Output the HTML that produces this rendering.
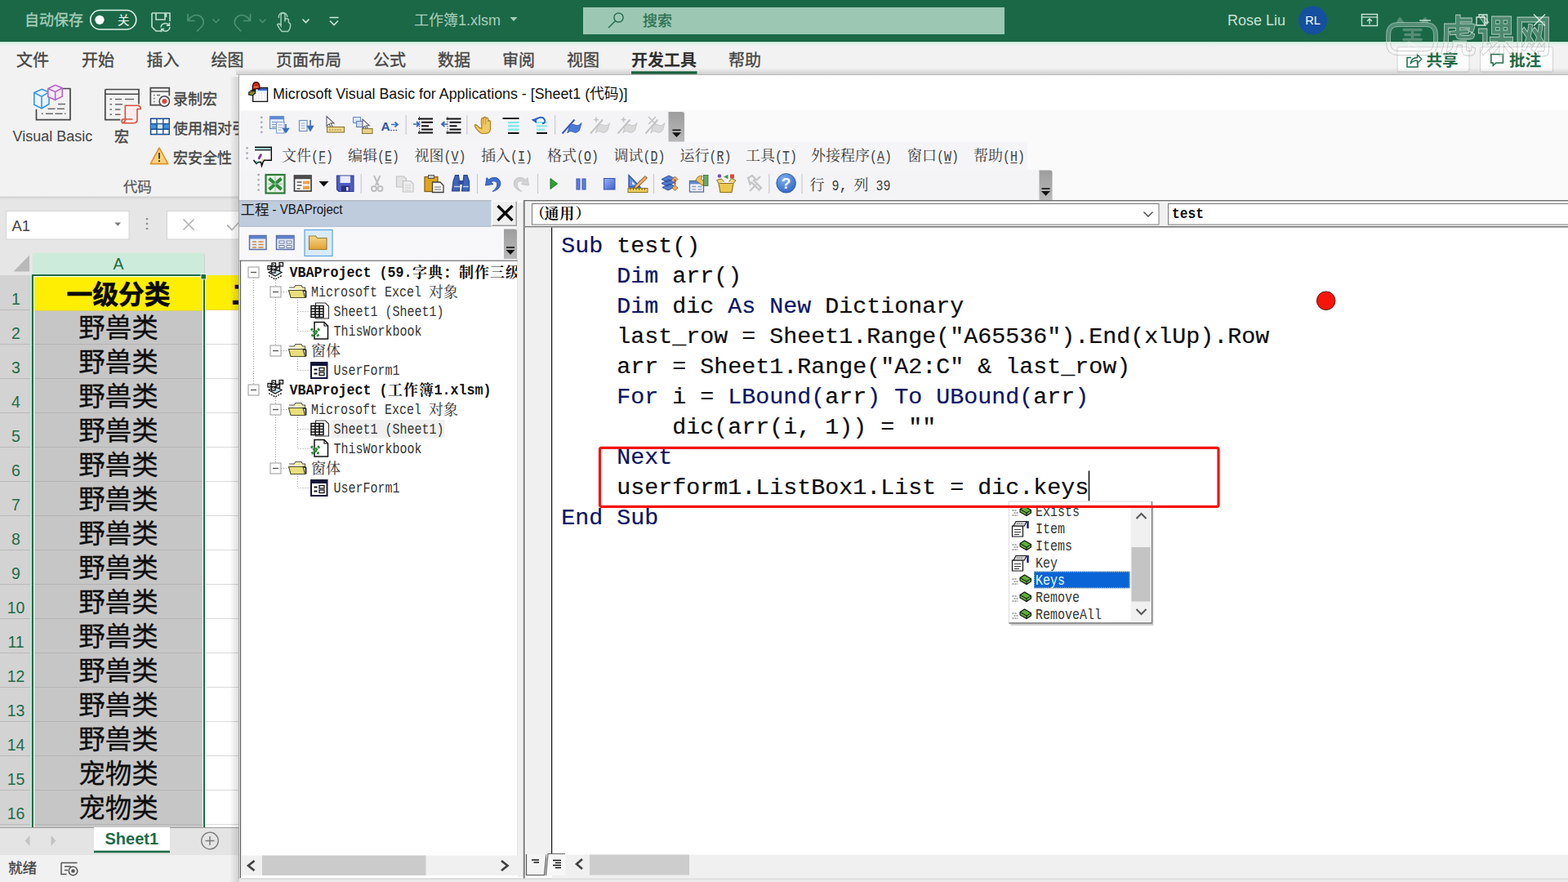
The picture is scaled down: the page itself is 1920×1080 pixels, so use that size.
<!DOCTYPE html>
<html lang="zh"><head><meta charset="utf-8"><title>Excel VBA</title>
<style>html,body{margin:0;padding:0;width:1920px;height:1080px;overflow:hidden;background:#f1f1f1;font-family:"Liberation Sans",sans-serif}svg{display:block;position:absolute;left:0;top:0;z-index:1}.t{position:absolute;left:0;top:0;width:1920px;height:1080px;overflow:hidden;z-index:0;color:#f1f1f1;font-size:8px;line-height:9px}.t p{margin:0}</style></head>
<body>
<div class="t"><p>自动保存 关  工作簿1.xlsm  搜索  Rose Liu RL</p><p>文件 开始 插入 绘图 页面布局 公式 数据 审阅 视图 开发工具 帮助  共享 批注</p><p>Visual Basic  宏  录制宏  使用相对引用  宏安全性  代码</p><p>A1  A  一级分类 二级分类  野兽类 宠物类  Sheet1  就绪</p><p>Microsoft Visual Basic for Applications - [Sheet1 (代码)]</p><p>文件(F) 编辑(E) 视图(V) 插入(I) 格式(O) 调试(D) 运行(R) 工具(T) 外接程序(A) 窗口(W) 帮助(H)  行 9, 列 39</p><p>工程 - VBAProject  VBAProject (59.字典：制作三级  Microsoft Excel 对象  Sheet1 (Sheet1)  ThisWorkbook  窗体  UserForm1  VBAProject (工作簿1.xlsm)</p><p>(通用)  test</p><p>Sub test()</p><p>Dim arr()</p><p>Dim dic As New Dictionary</p><p>last_row = Sheet1.Range(&quot;A65536&quot;).End(xlUp).Row</p><p>arr = Sheet1.Range(&quot;A2:C&quot; &amp; last_row)</p><p>For i = LBound(arr) To UBound(arr)</p><p>dic(arr(i, 1)) = &quot;&quot;</p><p>Next</p><p>userform1.ListBox1.List = dic.keys</p><p>End Sub</p><p>Exists Item Items Key Keys Remove RemoveAll</p><p>虎课网</p></div>
<svg width="1920" height="1080" viewBox="0 0 1920 1080" font-family='"Liberation Sans", "Noto Sans CJK SC", sans-serif'><defs><linearGradient id="tbg" x1="0" y1="0" x2="0" y2="1"><stop offset="0" stop-color="#d9fdec"/><stop offset="0.45" stop-color="#daf3e6"/><stop offset="1" stop-color="#f1f1f1"/></linearGradient><linearGradient id="rsh" x1="0" y1="0" x2="0" y2="1"><stop offset="0" stop-color="#f2f2f2"/><stop offset="0.35" stop-color="#d3d3d3"/><stop offset="1" stop-color="#e6e6e6"/></linearGradient><linearGradient id="vsh" x1="0" y1="0" x2="1" y2="0"><stop offset="0" stop-color="#000" stop-opacity="0"/><stop offset="1" stop-color="#000" stop-opacity="0.14"/></linearGradient><linearGradient id="vsh2" x1="0" y1="0" x2="0" y2="1"><stop offset="0" stop-color="#000" stop-opacity="0"/><stop offset="1" stop-color="#000" stop-opacity="0.16"/></linearGradient><linearGradient id="ovf" x1="0" y1="0" x2="0" y2="1"><stop offset="0" stop-color="#9d9d9d"/><stop offset="1" stop-color="#b9b9b9"/></linearGradient><linearGradient id="stp" x1="0" y1="0" x2="1" y2="1"><stop offset="0" stop-color="#9db4f2"/><stop offset="1" stop-color="#3c5fcf"/></linearGradient><radialGradient id="hlp" cx="0.4" cy="0.3" r="0.8"><stop offset="0" stop-color="#7fb0f0"/><stop offset="1" stop-color="#2a5fc0"/></radialGradient><linearGradient id="ptl" x1="0" y1="0" x2="0" y2="1"><stop offset="0" stop-color="#c3d1e6"/><stop offset="1" stop-color="#b1c3dc"/></linearGradient><linearGradient id="fld" x1="0" y1="0" x2="0" y2="1"><stop offset="0" stop-color="#f7d98a"/><stop offset="1" stop-color="#e0a030"/></linearGradient></defs>
<rect width="1920" height="1080" fill="#f1f1f1"/>
<rect x="0" y="0" width="1920" height="51" fill="#1b6847"/>
<rect x="0" y="51" width="1920" height="5" fill="url(#tbg)"/>
<rect x="0" y="50" width="1920" height="1.2" fill="#1a5a3d"/>
<text x="30" y="31" font-size="18" fill="#a7d0bb" stroke="#a7d0bb" stroke-width="0.3">自动保存</text>
<rect x="110.75" y="12.5" width="56" height="23.5" fill="none" stroke="#e3f3ea" stroke-width="1.6" rx="11.75"/>
<circle cx="122" cy="24.3" r="5.6" fill="#fff"/>
<text x="144" y="29.5" font-size="14.5" fill="#f4fbf7">关</text>
<path d="M186 16h22v10M186 16v17l5 5h6M191 16v8h11v-8M203.5 16v5" fill="none" stroke="#bfe0cf" stroke-width="1.6"/>
<path d="M197 33.5a5.5 5.5 0 0 1 10-2.5M208 33a5.5 5.5 0 0 1-10 2.8M207.5 27.5v3.8h-3.8M197.6 39.2v-3.6h3.6" fill="none" stroke="#bfe0cf" stroke-width="1.5"/>
<path d="M230 17v8.5h8.5M230.5 25c3-5.5 9-8 14-5.5 5 2.5 6.5 9 2.5 13l-6 6" fill="none" stroke="#4d9270" stroke-width="1.7"/>
<path d="M260.5 23.5l4 4 4-4" fill="none" stroke="#4d9270" stroke-width="1.5"/>
<path d="M306.5 17v8.5h-8.5M306 25c-3-5.5-9-8-14-5.5-5 2.5-6.5 9-2.5 13l6 6" fill="none" stroke="#4d9270" stroke-width="1.7"/>
<path d="M317.5 23.5l4 4 4-4" fill="none" stroke="#4d9270" stroke-width="1.5"/>
<path d="M344 27v-8.5a2.5 2.5 0 0 1 5 0v8M349 26.5v-1.5a2.2 2.2 0 0 1 4.400 0v3M353.400 28a2.200 2.200 0 0 1 2.200 2.200c0 4-1 6.500-3 8.300h-7.500c-2.500-2.500-4-5-5.500-8.500 1.500-1.500 3-.8 4.400 1.500V27" fill="none" stroke="#a5d0ba" stroke-width="1.5"/>
<path d="M341.5 22a5.2 5.2 0 1 1 10.2-1" fill="none" stroke="#a5d0ba" stroke-width="1.3"/>
<path d="M370.5 23.5l4 4 4-4" fill="none" stroke="#cfe8db" stroke-width="1.6"/>
<path d="M403.5 21.5h11M404 25.5l5 5 5-5" fill="none" stroke="#cfe8db" stroke-width="1.6"/>
<text x="507" y="31" font-size="18" fill="#a7d0bb">工作簿</text>
<text x="561.0" y="31" font-size="18" fill="#a7d0bb">1.xlsm</text>
<path d="M624.5 21h9l-4.500 5z" fill="#a7d0bb"/>
<rect x="714" y="9" width="516" height="33" fill="#9cc8b3"/>
<circle cx="757.5" cy="21.5" r="5.6" fill="none" stroke="#2d7051" stroke-width="1.5"/>
<line x1="753.5" y1="25.5" x2="745" y2="34" stroke="#2d7051" stroke-width="1.6"/>
<text x="787" y="31.5" font-size="18" fill="#2d7051" stroke="#2d7051" stroke-width="0.3">搜索</text>
<text x="1503" y="31" font-size="18" fill="#c4e2d3">Rose Liu</text>
<circle cx="1607.5" cy="25" r="17.5" fill="#14509f"/>
<text x="1607.5" y="30.3" font-size="14.5" fill="#fff" text-anchor="middle">RL</text>
<rect x="1667.5" y="17.5" width="19" height="14" fill="none" stroke="#cfe8db" stroke-width="1.4"/>
<line x1="1667.5" y1="21" x2="1686.5" y2="21" stroke="#cfe8db" stroke-width="1.2"/>
<path d="M1677 29.5v-6M1674 26l3-3 3 3" fill="none" stroke="#cfe8db" stroke-width="1.3"/>
<line x1="1738" y1="25" x2="1752" y2="25" stroke="#cfe8db" stroke-width="1.3"/>
<path d="M1808 21h10v10h-10zM1811 21v-3h10v10h-3" fill="none" stroke="#cfe8db" stroke-width="1.3"/>
<path d="M1878 17.5l14 14M1892 17.5l-14 14" fill="none" stroke="#cfe8db" stroke-width="1.4"/>
<rect x="0" y="56" width="1920" height="185" fill="#f2f2f2"/>
<text x="20" y="80.6" font-size="20" fill="#454545" stroke="#454545" stroke-width="0.35">文件</text>
<text x="100" y="80.6" font-size="20" fill="#454545" stroke="#454545" stroke-width="0.35">开始</text>
<text x="179.5" y="80.6" font-size="20" fill="#454545" stroke="#454545" stroke-width="0.35">插入</text>
<text x="258.5" y="80.6" font-size="20" fill="#454545" stroke="#454545" stroke-width="0.35">绘图</text>
<text x="338" y="80.6" font-size="20" fill="#454545" stroke="#454545" stroke-width="0.35">页面布局</text>
<text x="457" y="80.6" font-size="20" fill="#454545" stroke="#454545" stroke-width="0.35">公式</text>
<text x="536" y="80.6" font-size="20" fill="#454545" stroke="#454545" stroke-width="0.35">数据</text>
<text x="615" y="80.6" font-size="20" fill="#454545" stroke="#454545" stroke-width="0.35">审阅</text>
<text x="694" y="80.6" font-size="20" fill="#454545" stroke="#454545" stroke-width="0.35">视图</text>
<text x="892" y="80.6" font-size="20" fill="#454545" stroke="#454545" stroke-width="0.35">帮助</text>
<text x="773" y="80.6" font-size="20" font-weight="bold" fill="#2f2f2f">开发工具</text>
<rect x="773" y="87.3" width="80.5" height="3.4" fill="#1e6b47"/>
<rect x="1711" y="57.5" width="88" height="30.5" fill="#fdfdfd" stroke="#d2d2d2" stroke-width="1" rx="2"/>
<rect x="1812.5" y="57.5" width="89" height="30.5" fill="#fdfdfd" stroke="#d2d2d2" stroke-width="1" rx="2"/>
<path d="M1728 70.5h-5v11.5h13v-4.500" fill="none" stroke="#1e6b47" stroke-width="1.5"/>
<path d="M1727 78c.8-5 4-7.500 8.500-7.500v-3.500l5.200 5.300-5.200 5.300v-3.500c-3.800 0-6.300 1-8.500 3.900z" fill="none" stroke="#1e6b47" stroke-width="1.4"/>
<text x="1746.5" y="81.2" font-size="19.6" font-weight="bold" fill="#1e6b47">共享</text>
<path d="M1825.800 66.500h14.600v10.400h-8.500l-3.600 3.400v-3.400h-2.500z" fill="none" stroke="#1e6b47" stroke-width="1.5"/>
<text x="1848" y="81.2" font-size="19.6" font-weight="bold" fill="#1e6b47">批注</text>
<path d="M64 108.500h22v38.200h-41.500v-13" fill="none" stroke="#464646" stroke-width="1.7"/>
<path d="M71 127.500h9.500M58.500 133.300h22M56 139.200h24.500" fill="none" stroke="#6a6a6a" stroke-width="1.5" stroke-dasharray="9 2.500"/>
<path d="M50.800 139.200h2" fill="none" stroke="#6a6a6a" stroke-width="1.5"/>
<path d="M41.800 113.500l9.600-4.300 8.600 3.700v14.600l-9 5.300-9.200-4.600z" fill="#eaf4fc" stroke="#3a96dd" stroke-width="1.6" stroke-linejoin="round"/>
<path d="M41.800 113.500l9.200 4.600 9-5.200M51 118.100v14.700" fill="none" stroke="#3a96dd" stroke-width="1.6"/>
<path d="M58.800 108.500l8.900-4.200 8.600 3.400v10.300l-8.600 4.400-8.900-4z" fill="#f6e9f8" stroke="#b467c4" stroke-width="1.6" stroke-linejoin="round"/>
<path d="M58.800 108.500l8.900 3.900 8.600-4.700M67.700 112.400v10" fill="none" stroke="#b467c4" stroke-width="1.6"/>
<text x="15.5" y="172.7" font-size="18" fill="#444">Visual Basic</text>
<path d="M128.800 109.500h41.200v18M128.800 109.500v37.200h18.500" fill="none" stroke="#464646" stroke-width="1.7"/>
<line x1="128.800" y1="115.300" x2="170" y2="115.300" stroke="#464646" stroke-width="1.5"/>
<line x1="134.5" y1="121.4" x2="137" y2="121.4" stroke="#6a6a6a" stroke-width="1.5"/>
<line x1="134.5" y1="127.8" x2="137" y2="127.8" stroke="#6a6a6a" stroke-width="1.5"/>
<line x1="134.5" y1="134" x2="137" y2="134" stroke="#6a6a6a" stroke-width="1.5"/>
<line x1="134.5" y1="140.2" x2="137" y2="140.2" stroke="#6a6a6a" stroke-width="1.5"/>
<path d="M141 121.400h8M153 121.400h11M141 127.800h9M141 134h6.500M141 140.200h6.500" fill="none" stroke="#6a6a6a" stroke-width="1.5"/>
<path d="M153.300 129.300h15.200c2.600 0 3.700 1.700 3.700 4.200h-4.200v12.800c0 2.700-1.800 4.400-4.400 4.400h-13.700c2.400-.6 3.400-2 3.400-4.400z" fill="#fdeeec" stroke="#d8503f" stroke-width="1.6" stroke-linejoin="round"/>
<path d="M149.900 150.700c-1-1.300-1-3.500 0-4.700h12.500" fill="none" stroke="#d8503f" stroke-width="1.5"/>
<text x="140" y="173.700" font-size="18" fill="#444" stroke="#444" stroke-width="0.35">宏</text>
<path d="M197 128.700h-12.700v-21h23v9.500" fill="none" stroke="#464646" stroke-width="1.7"/>
<line x1="184.3" y1="112" x2="207.3" y2="112" stroke="#464646" stroke-width="1.4"/>
<path d="M188 116.500h1.500M188 120.500h1.500M188 124.500h1.500M192 116.500h4" fill="none" stroke="#6a6a6a" stroke-width="1.3"/>
<circle cx="201.3" cy="124" r="6.2" fill="#f6f6f6" stroke="#464646" stroke-width="1.5"/>
<circle cx="201.3" cy="124" r="3" fill="#d8473a"/>
<text x="212" y="127.6" font-size="18" fill="#444" stroke="#444" stroke-width="0.35">录制宏</text>
<rect x="184.6" y="145.3" width="22.6" height="19.2" fill="#fff" stroke="#1d4f91" stroke-width="1.6"/>
<rect x="185.4" y="151.8" width="21" height="6.3" fill="#3b8ee0"/>
<rect x="192.5" y="151.8" width="7" height="6.3" fill="#cfe4f8"/>
<path d="M192 145.300v19.200M199.800 145.300v19.200M184.600 151.600h22.600M184.600 158.300h22.600" fill="none" stroke="#1d4f91" stroke-width="1.4"/>
<text x="212" y="163.600" font-size="18" fill="#444" stroke="#444" stroke-width="0.35">使用相对引</text>
<path d="M195 181l10.800 19.600h-21.600z" fill="#fbd27a" stroke="#e3922a" stroke-width="1.6" stroke-linejoin="round"/>
<path d="M195 187v7.500" fill="none" stroke="#3a3a3a" stroke-width="1.9"/>
<circle cx="195" cy="197.2" r="1.1" fill="#3a3a3a"/>
<text x="212" y="199.6" font-size="18" fill="#444" stroke="#444" stroke-width="0.35">宏安全性</text>
<text x="150.7" y="234.8" font-size="17.6" fill="#5a5a5a" stroke="#5a5a5a" stroke-width="0.25">代码</text>
<rect x="0" y="243" width="1920" height="68" fill="#e6e6e6"/>
<rect x="0" y="239.5" width="1920" height="5" fill="url(#rsh)"/>
<rect x="7.5" y="258.5" width="150.5" height="34.5" fill="#fff" stroke="#d4d4d4" stroke-width="1"/>
<text x="14.5" y="282.5" font-size="18.5" fill="#444">A1</text>
<path d="M140.500 272.500h7.600l-3.800 4.200z" fill="#777"/>
<circle cx="180" cy="268" r="1.3" fill="#8c8c8c"/>
<circle cx="180" cy="274" r="1.3" fill="#8c8c8c"/>
<circle cx="180" cy="280" r="1.3" fill="#8c8c8c"/>
<rect x="204.5" y="258.5" width="120" height="34.5" fill="#fff" stroke="#d4d4d4" stroke-width="1"/>
<path d="M224.500 268.500l13 13M237.500 268.500l-13 13" fill="none" stroke="#b5b5b5" stroke-width="1.7"/>
<path d="M278 275.500l6 6 12-13" fill="none" stroke="#b5b5b5" stroke-width="1.8"/>
<rect x="0" y="1013.5" width="1920" height="33.5" fill="#e4e4e4"/>
<rect x="0" y="1012.8" width="300" height="1.2" fill="#9f9f9f"/>
<path d="M36.500 1023l-6 6.500 6 6.500z" fill="#c3c3c3"/>
<path d="M62.500 1023l6 6.500-6 6.500z" fill="#c3c3c3"/>
<rect x="115" y="1011" width="93" height="32" fill="#fff"/>
<rect x="115" y="1041.6" width="93" height="2.6" fill="#1e6b47"/>
<text x="161.3" y="1033.6" font-size="20" fill="#1e6b47" font-weight="bold" text-anchor="middle">Sheet1</text>
<circle cx="257" cy="1029.5" r="10.3" fill="none" stroke="#7a7a7a" stroke-width="1.3"/>
<path d="M251.500 1029.500h11M257 1024v11" fill="none" stroke="#7a7a7a" stroke-width="1.4"/>
<rect x="0" y="1047" width="1920" height="33" fill="#f1f1f1"/>
<text x="10" y="1068.6" font-size="17.6" fill="#444" stroke="#444" stroke-width="0.3">就绪</text>
<path d="M75 1056.500h19.500M75 1056.500v14h6.500M79 1061h8M79 1065.500h4" fill="none" stroke="#555" stroke-width="1.5"/>
<circle cx="89.5" cy="1066.5" r="5.3" fill="#f1f1f1" stroke="#555" stroke-width="1.5"/>
<circle cx="89.5" cy="1066.5" r="2.3" fill="#555"/>
<rect x="0" y="309" width="300" height="28" fill="#e6e6e6"/>
<rect x="40" y="309.5" width="210" height="27" fill="#cdebdb"/>
<text x="145" y="330.3" font-size="19.5" fill="#1e6b47" text-anchor="middle">A</text>
<path d="M16.500 332.500h19.500v-20z" fill="#b9b9b9"/>
<line x1="250.5" y1="311" x2="250.5" y2="336" stroke="#cfcfcf" stroke-width="1"/>
<rect x="0" y="337" width="40" height="676" fill="#d3d3d3"/>
<rect x="40" y="337" width="260" height="43" fill="#fdee03"/>
<rect x="40" y="380" width="210" height="633" fill="#c6c6c6"/>
<rect x="251" y="380" width="49" height="633" fill="#fff"/>
<line x1="0" y1="379.5" x2="38" y2="379.5" stroke="#b9b9b9" stroke-width="1"/>
<line x1="251" y1="379.5" x2="300" y2="379.5" stroke="#e9dc52" stroke-width="1"/>
<line x1="0" y1="421.5" x2="38" y2="421.5" stroke="#b9b9b9" stroke-width="1"/>
<line x1="41" y1="421.5" x2="249" y2="421.5" stroke="#b4b4b4" stroke-width="1"/>
<line x1="251" y1="421.5" x2="300" y2="421.5" stroke="#dadada" stroke-width="1"/>
<line x1="0" y1="463.5" x2="38" y2="463.5" stroke="#b9b9b9" stroke-width="1"/>
<line x1="41" y1="463.5" x2="249" y2="463.5" stroke="#b4b4b4" stroke-width="1"/>
<line x1="251" y1="463.5" x2="300" y2="463.5" stroke="#dadada" stroke-width="1"/>
<line x1="0" y1="505.5" x2="38" y2="505.5" stroke="#b9b9b9" stroke-width="1"/>
<line x1="41" y1="505.5" x2="249" y2="505.5" stroke="#b4b4b4" stroke-width="1"/>
<line x1="251" y1="505.5" x2="300" y2="505.5" stroke="#dadada" stroke-width="1"/>
<line x1="0" y1="547.5" x2="38" y2="547.5" stroke="#b9b9b9" stroke-width="1"/>
<line x1="41" y1="547.5" x2="249" y2="547.5" stroke="#b4b4b4" stroke-width="1"/>
<line x1="251" y1="547.5" x2="300" y2="547.5" stroke="#dadada" stroke-width="1"/>
<line x1="0" y1="589.5" x2="38" y2="589.5" stroke="#b9b9b9" stroke-width="1"/>
<line x1="41" y1="589.5" x2="249" y2="589.5" stroke="#b4b4b4" stroke-width="1"/>
<line x1="251" y1="589.5" x2="300" y2="589.5" stroke="#dadada" stroke-width="1"/>
<line x1="0" y1="631.5" x2="38" y2="631.5" stroke="#b9b9b9" stroke-width="1"/>
<line x1="41" y1="631.5" x2="249" y2="631.5" stroke="#b4b4b4" stroke-width="1"/>
<line x1="251" y1="631.5" x2="300" y2="631.5" stroke="#dadada" stroke-width="1"/>
<line x1="0" y1="673.5" x2="38" y2="673.5" stroke="#b9b9b9" stroke-width="1"/>
<line x1="41" y1="673.5" x2="249" y2="673.5" stroke="#b4b4b4" stroke-width="1"/>
<line x1="251" y1="673.5" x2="300" y2="673.5" stroke="#dadada" stroke-width="1"/>
<line x1="0" y1="715.5" x2="38" y2="715.5" stroke="#b9b9b9" stroke-width="1"/>
<line x1="41" y1="715.5" x2="249" y2="715.5" stroke="#b4b4b4" stroke-width="1"/>
<line x1="251" y1="715.5" x2="300" y2="715.5" stroke="#dadada" stroke-width="1"/>
<line x1="0" y1="757.5" x2="38" y2="757.5" stroke="#b9b9b9" stroke-width="1"/>
<line x1="41" y1="757.5" x2="249" y2="757.5" stroke="#b4b4b4" stroke-width="1"/>
<line x1="251" y1="757.5" x2="300" y2="757.5" stroke="#dadada" stroke-width="1"/>
<line x1="0" y1="799.5" x2="38" y2="799.5" stroke="#b9b9b9" stroke-width="1"/>
<line x1="41" y1="799.5" x2="249" y2="799.5" stroke="#b4b4b4" stroke-width="1"/>
<line x1="251" y1="799.5" x2="300" y2="799.5" stroke="#dadada" stroke-width="1"/>
<line x1="0" y1="841.5" x2="38" y2="841.5" stroke="#b9b9b9" stroke-width="1"/>
<line x1="41" y1="841.5" x2="249" y2="841.5" stroke="#b4b4b4" stroke-width="1"/>
<line x1="251" y1="841.5" x2="300" y2="841.5" stroke="#dadada" stroke-width="1"/>
<line x1="0" y1="883.5" x2="38" y2="883.5" stroke="#b9b9b9" stroke-width="1"/>
<line x1="41" y1="883.5" x2="249" y2="883.5" stroke="#b4b4b4" stroke-width="1"/>
<line x1="251" y1="883.5" x2="300" y2="883.5" stroke="#dadada" stroke-width="1"/>
<line x1="0" y1="925.5" x2="38" y2="925.5" stroke="#b9b9b9" stroke-width="1"/>
<line x1="41" y1="925.5" x2="249" y2="925.5" stroke="#b4b4b4" stroke-width="1"/>
<line x1="251" y1="925.5" x2="300" y2="925.5" stroke="#dadada" stroke-width="1"/>
<line x1="0" y1="967.5" x2="38" y2="967.5" stroke="#b9b9b9" stroke-width="1"/>
<line x1="41" y1="967.5" x2="249" y2="967.5" stroke="#b4b4b4" stroke-width="1"/>
<line x1="251" y1="967.5" x2="300" y2="967.5" stroke="#dadada" stroke-width="1"/>
<line x1="0" y1="1009.5" x2="38" y2="1009.5" stroke="#b9b9b9" stroke-width="1"/>
<line x1="41" y1="1009.5" x2="249" y2="1009.5" stroke="#b4b4b4" stroke-width="1"/>
<line x1="251" y1="1009.5" x2="300" y2="1009.5" stroke="#dadada" stroke-width="1"/>
<line x1="41" y1="380.5" x2="249" y2="380.5" stroke="#d8cf6a" stroke-width="1"/>
<text x="19.5" y="372.8" font-size="19.5" fill="#1e6b47" text-anchor="middle">1</text>
<text x="81.4" y="372.3" font-size="31.8" font-weight="bold" fill="#0a0a0a" stroke="#0a0a0a" stroke-width="0.6">一级分类</text>
<text x="19.5" y="414.8" font-size="19.5" fill="#1e6b47" text-anchor="middle">2</text>
<text x="96.25" y="413.2" font-size="32.5" fill="#0d0d0d" stroke="#0d0d0d" stroke-width="0.3">野兽类</text>
<text x="19.5" y="456.8" font-size="19.5" fill="#1e6b47" text-anchor="middle">3</text>
<text x="96.25" y="455.2" font-size="32.5" fill="#0d0d0d" stroke="#0d0d0d" stroke-width="0.3">野兽类</text>
<text x="19.5" y="498.8" font-size="19.5" fill="#1e6b47" text-anchor="middle">4</text>
<text x="96.25" y="497.2" font-size="32.5" fill="#0d0d0d" stroke="#0d0d0d" stroke-width="0.3">野兽类</text>
<text x="19.5" y="540.8" font-size="19.5" fill="#1e6b47" text-anchor="middle">5</text>
<text x="96.25" y="539.2" font-size="32.5" fill="#0d0d0d" stroke="#0d0d0d" stroke-width="0.3">野兽类</text>
<text x="19.5" y="582.8" font-size="19.5" fill="#1e6b47" text-anchor="middle">6</text>
<text x="96.25" y="581.2" font-size="32.5" fill="#0d0d0d" stroke="#0d0d0d" stroke-width="0.3">野兽类</text>
<text x="19.5" y="624.8" font-size="19.5" fill="#1e6b47" text-anchor="middle">7</text>
<text x="96.25" y="623.2" font-size="32.5" fill="#0d0d0d" stroke="#0d0d0d" stroke-width="0.3">野兽类</text>
<text x="19.5" y="666.8" font-size="19.5" fill="#1e6b47" text-anchor="middle">8</text>
<text x="96.25" y="665.2" font-size="32.5" fill="#0d0d0d" stroke="#0d0d0d" stroke-width="0.3">野兽类</text>
<text x="19.5" y="708.8" font-size="19.5" fill="#1e6b47" text-anchor="middle">9</text>
<text x="96.25" y="707.2" font-size="32.5" fill="#0d0d0d" stroke="#0d0d0d" stroke-width="0.3">野兽类</text>
<text x="19.5" y="750.8" font-size="19.5" fill="#1e6b47" text-anchor="middle">10</text>
<text x="96.25" y="749.2" font-size="32.5" fill="#0d0d0d" stroke="#0d0d0d" stroke-width="0.3">野兽类</text>
<text x="19.5" y="792.8" font-size="19.5" fill="#1e6b47" text-anchor="middle">11</text>
<text x="96.25" y="791.2" font-size="32.5" fill="#0d0d0d" stroke="#0d0d0d" stroke-width="0.3">野兽类</text>
<text x="19.5" y="834.8" font-size="19.5" fill="#1e6b47" text-anchor="middle">12</text>
<text x="96.25" y="833.2" font-size="32.5" fill="#0d0d0d" stroke="#0d0d0d" stroke-width="0.3">野兽类</text>
<text x="19.5" y="876.8" font-size="19.5" fill="#1e6b47" text-anchor="middle">13</text>
<text x="96.25" y="875.2" font-size="32.5" fill="#0d0d0d" stroke="#0d0d0d" stroke-width="0.3">野兽类</text>
<text x="19.5" y="918.8" font-size="19.5" fill="#1e6b47" text-anchor="middle">14</text>
<text x="96.25" y="917.2" font-size="32.5" fill="#0d0d0d" stroke="#0d0d0d" stroke-width="0.3">野兽类</text>
<text x="19.5" y="960.8" font-size="19.5" fill="#1e6b47" text-anchor="middle">15</text>
<text x="96.25" y="959.2" font-size="32.5" fill="#0d0d0d" stroke="#0d0d0d" stroke-width="0.3">宠物类</text>
<text x="19.5" y="1002.8" font-size="19.5" fill="#1e6b47" text-anchor="middle">16</text>
<text x="96.25" y="1001.2" font-size="32.5" fill="#0d0d0d" stroke="#0d0d0d" stroke-width="0.3">宠物类</text>
<text x="283.5" y="372.3" font-size="31.8" font-weight="bold" fill="#0a0a0a" stroke="#0a0a0a" stroke-width="0.6">二</text>
<rect x="37" y="337" width="1" height="676" fill="#c3e2d5"/>
<rect x="41" y="338" width="1.2" height="675" fill="#f4fbf7"/>
<rect x="247.8" y="338" width="1.2" height="675" fill="#e6f6ee"/>
<rect x="251" y="338" width="1" height="675" fill="#eefaf4"/>
<rect x="41" y="338" width="208" height="1.3" fill="#f1ffd9"/>
<rect x="39" y="336" width="2" height="677" fill="#1e6b47"/>
<rect x="249" y="336" width="2" height="677" fill="#1e6b47"/>
<rect x="39" y="336" width="212" height="2" fill="#1e6b47"/>
<rect x="246" y="335.5" width="6.5" height="6.5" fill="#1e6b47" stroke="#e6f2ec" stroke-width="1"/>
<rect x="281" y="94" width="12" height="990" fill="url(#vsh)"/>
<rect x="289" y="83" width="1640" height="9" fill="url(#vsh2)"/>
<rect x="293" y="92" width="1640" height="990" fill="#fff"/>
<rect x="293" y="91" width="1640" height="1" fill="#b8b8b8"/>
<rect x="292" y="91" width="1" height="985" fill="#a9a9a9"/>
<rect x="309.7" y="107.5" width="17.8" height="16.8" fill="#fff" stroke="#0d0d0d" stroke-width="1.3"/>
<rect x="315.5" y="108.1" width="11.4" height="2.7" fill="#2d55c0"/>
<rect x="310.4" y="111" width="16.4" height="2.2" fill="#d9f3fa"/>
<path d="M313 114.500h1.200M316.500 114.500h1.200M320 114.500h1.200M323.500 114.500h1.200" fill="none" stroke="#c6c6d0" stroke-width="1.1"/>
<path d="M313 117.500h1.200M316.500 117.500h1.200M320 117.500h1.200M323.500 117.500h1.200" fill="none" stroke="#c6c6d0" stroke-width="1.1"/>
<path d="M313 120.500h1.200M316.500 120.500h1.200M320 120.500h1.200M323.500 120.500h1.200" fill="none" stroke="#c6c6d0" stroke-width="1.1"/>
<path d="M309.300 109.600v-4.300c.6-3.300 2.200-4.600 4.300-4.600 2.300 0 3.800 1.600 4.200 4.600v3.300h-4l-1.500 1z" fill="#cf2a17" stroke="#2a0d08" stroke-width="1.3"/>
<path d="M310.500 106.500h6" fill="none" stroke="#f08a6a" stroke-width="1"/>
<path d="M305 112.500l7.500-1.500v3.200l-3.500 2.800-4.500-1.200z" fill="#8a8a2a" stroke="#14140a" stroke-width="1.1"/>
<path d="M306.500 110.800h7" fill="none" stroke="#111" stroke-width="1.2"/>
<text x="334" y="120.5" font-size="18" fill="#111" textLength="388.1" lengthAdjust="spacingAndGlyphs">Microsoft Visual Basic for Applications - [Sheet1 (</text>
<text x="722.11" y="120.5" font-size="17.77" fill="#111">代码</text>
<text x="757.6461761182109" y="120.5" font-size="18" fill="#111" textLength="10.9" lengthAdjust="spacingAndGlyphs">)]</text>
<rect x="293" y="135" width="1640" height="110.5" fill="#fafafa"/>
<rect x="294" y="135.5" width="545" height="38" fill="#f4f4f7"/>
<rect x="294" y="173.5" width="964" height="34.5" fill="#f5f5f8"/>
<rect x="294" y="208" width="995" height="37" fill="#f4f4f7"/>
<rect x="641" y="245" width="1300" height="1.6" fill="#6b6b6b"/>
<rect x="641" y="246.6" width="1300" height="1.4" fill="#fdfdfd"/>
<rect x="319" y="142.5" width="2.5" height="2.5" fill="#a9a9b2" rx="0.8"/>
<rect x="319" y="148.5" width="2.5" height="2.5" fill="#a9a9b2" rx="0.8"/>
<rect x="319" y="154.5" width="2.5" height="2.5" fill="#a9a9b2" rx="0.8"/>
<rect x="319" y="160.5" width="2.5" height="2.5" fill="#a9a9b2" rx="0.8"/>
<rect x="330.5" y="142.5" width="17" height="15" fill="#e9f0fb" stroke="#6f8fc8" stroke-width="1.2"/>
<rect x="331" y="143" width="16" height="3.2" fill="#5d8ad6"/>
<path d="M333 149.500h5M333 152.500h5M333 155.500h5" fill="none" stroke="#7d8fb0" stroke-width="1.2"/>
<rect x="338.5" y="149.5" width="9.5" height="13.5" fill="#f8fbff" stroke="#7f9fd0" stroke-width="1.1"/>
<path d="M340.500 153h5.500M340.500 156h5.500M340.500 159h4" fill="none" stroke="#8aa0c4" stroke-width="1.1"/>
<path d="M350 152v7M346.800 157.500l3.200 4.500 3.200-4.500z" fill="#3a6cc6" stroke="#3a6cc6" stroke-width="1.6"/>
<rect x="366.5" y="147.5" width="9.5" height="13" fill="#f4f8ff" stroke="#6f8fc8" stroke-width="1.2"/>
<path d="M368.500 151h5M368.500 154h5M368.500 157h5" fill="none" stroke="#8aa0c4" stroke-width="1.1"/>
<path d="M380 147v9M376.800 154.500l3.200 5.500 3.200-5.500z" fill="#3a6cc6" stroke="#3a6cc6" stroke-width="1.6"/>
<path d="M400 142.500v12l3-2.800 2.500 5 2-1-2.500-4.800h4z" fill="#fff" stroke="#5a5a6a" stroke-width="1.1"/>
<rect x="400.5" y="155.5" width="21" height="6.5" fill="#f0d88a" stroke="#8a7a3a" stroke-width="1.1"/>
<path d="M403 158.800h16" fill="none" stroke="#a89a5a" stroke-width="1.2" stroke-dasharray="2 1.200"/>
<rect x="432.5" y="143.5" width="9" height="7" fill="#dfe9f8" stroke="#6f8fc8" stroke-width="1.1"/>
<rect x="436.5" y="148.5" width="9" height="7" fill="#cfdcf2" stroke="#5f7fb8" stroke-width="1.1"/>
<path d="M444 146v11l2.800-2.500 2.200 4.300 1.800-.9-2.200-4.200h3.600z" fill="#fff" stroke="#5a5a6a" stroke-width="1.1"/>
<rect x="443.5" y="157.5" width="12.5" height="6" fill="#e6d28a" stroke="#8a7a3a" stroke-width="1.1"/>
<text x="466.5" y="160" font-size="15.5" fill="#2f55a8" font-weight="bold">A</text>
<path d="M479 152.500h6.500M483.500 149.500l3.500 3-3.500 3" fill="none" stroke="#3a6cc6" stroke-width="1.7"/>
<path d="M478.500 159.500h9" fill="none" stroke="#2f55a8" stroke-width="1.5" stroke-dasharray="1.500 1.500"/>
<line x1="497.2" y1="141" x2="497.2" y2="165" stroke="#c9c9cf" stroke-width="1.2"/>
<path d="M512 145.500h18M516 149.800h14M516 154.200h9M516 158.500h14M512 162.500h18" fill="none" stroke="#111" stroke-width="2.1"/>
<path d="M513.5 143v21" fill="none" stroke="#222" stroke-width="1" stroke-dasharray="1.200 1.600"/>
<path d="M506 152h6M510 149l3.500 3-3.500 3" fill="none" stroke="#2f62c0" stroke-width="1.7"/>
<path d="M546.5 145.500h18M550.5 149.800h14M550.5 154.200h9M550.5 158.500h14M546.5 162.500h18" fill="none" stroke="#111" stroke-width="2.1"/>
<path d="M548.0 143v21" fill="none" stroke="#222" stroke-width="1" stroke-dasharray="1.200 1.600"/>
<path d="M541.5 152h6.500M544.5 149l-3.500 3 3.500 3" fill="none" stroke="#2f62c0" stroke-width="1.7"/>
<line x1="571.8" y1="141" x2="571.8" y2="165" stroke="#c9c9cf" stroke-width="1.2"/>
<path d="M586.500 156c-2-2.500-3.800-4-5-3.200-1.200 1 .5 3 2.500 5.700 2 2.800 3.800 5 7.500 5h3c3.800 0 6-2.500 6-6.500v-8c0-1.800-2.600-1.800-2.600 0v-3.300c0-1.900-2.700-1.900-2.700 0v-1.200c0-1.900-2.800-1.900-2.800 0v1.200c0-1.800-2.700-1.800-2.700 0v11.800z" fill="#f2c860" stroke="#a87b25" stroke-width="1.1"/>
<path d="M589.200 146v6.500M592 144.500v8M594.700 145.700v7" fill="none" stroke="#c29535" stroke-width="0.9"/>
<path d="M615.500 145h20M622 163h13.500" fill="none" stroke="#111" stroke-width="2"/>
<path d="M622 150h13.500M622 154.300h13.500M622 158.600h13.500" fill="none" stroke="#7fe6e6" stroke-width="2.2"/>
<path d="M657 150h13M657 154.300h13M657 158.600h10" fill="none" stroke="#8fe8ee" stroke-width="2.2"/>
<path d="M657 163h13" fill="none" stroke="#111" stroke-width="2"/>
<path d="M655.500 148.500c1-5 9-6.500 11.500-1.800 1.200 2.500-.5 4.500-3 4.500" fill="none" stroke="#2f62c0" stroke-width="1.9"/>
<path d="M650.500 146.500l6.500-2v6.500z" fill="#2f62c0"/>
<line x1="679.6" y1="141" x2="679.6" y2="165" stroke="#c9c9cf" stroke-width="1.2"/>
<path d="M688.5 163.500l15-17" fill="none" stroke="#3558b0" stroke-width="1.9"/>
<path d="M697.0 155.500c2.500-3.500 4.500-3.800 7-2.500s5 1 8-2.500l-2.500 9c-3 3.200-5.500 3.300-8 2s-4.200-1.200-6.700 1.500z" fill="#4a7ad8" stroke="#3558b0" stroke-width="0.9"/>
<path d="M723 163.500l15-17" fill="none" stroke="#c2c2c2" stroke-width="1.9"/>
<path d="M731.5 155.500c2.500-3.500 4.500-3.800 7-2.500s5 1 8-2.500l-2.500 9c-3 3.200-5.500 3.300-8 2s-4.200-1.200-6.700 1.500z" fill="#d9d9d9" stroke="#c2c2c2" stroke-width="0.9"/>
<path d="M727 146.500h6M730 143.500v6" fill="none" stroke="#c2c2c2" stroke-width="1.6"/>
<path d="M756.5 163.500l15-17" fill="none" stroke="#c2c2c2" stroke-width="1.9"/>
<path d="M765.0 155.500c2.500-3.500 4.500-3.800 7-2.500s5 1 8-2.500l-2.500 9c-3 3.200-5.500 3.300-8 2s-4.200-1.200-6.700 1.500z" fill="#d9d9d9" stroke="#c2c2c2" stroke-width="0.9"/>
<path d="M760.500 146.500h6M763.500 143.500v6" fill="none" stroke="#c2c2c2" stroke-width="1.6"/>
<path d="M790.5 163.500l15-17" fill="none" stroke="#c2c2c2" stroke-width="1.9"/>
<path d="M799.0 155.500c2.500-3.500 4.500-3.800 7-2.500s5 1 8-2.500l-2.500 9c-3 3.200-5.500 3.300-8 2s-4.200-1.200-6.700 1.500z" fill="#d9d9d9" stroke="#c2c2c2" stroke-width="0.9"/>
<path d="M794 143l9 9M803 143l-9 9" fill="none" stroke="#c2c2c2" stroke-width="1.6"/>
<path d="M818.500 137h16.500q3 0 3 3v33.500h-19.500z" fill="url(#ovf)"/>
<path d="M823.500 159.300h10" fill="none" stroke="#111" stroke-width="1.6"/>
<path d="M823 162.300h11l-5.500 5.700z" fill="#111"/>
<rect x="301.3" y="180.0" width="2.5" height="2.5" fill="#a9a9b2" rx="0.8"/>
<rect x="301.3" y="186.3" width="2.5" height="2.5" fill="#a9a9b2" rx="0.8"/>
<rect x="301.3" y="192.6" width="2.5" height="2.5" fill="#a9a9b2" rx="0.8"/>
<rect x="312.3" y="180.3" width="19.8" height="16" fill="#fcfefe"/>
<rect x="312.3" y="181" width="19.5" height="2.5" fill="#9fd6d6"/>
<path d="M312 180.300h20.300v16h-9" fill="none" stroke="#0a0a0a" stroke-width="1.4"/>
<path d="M312 183.800h19.600" fill="none" stroke="#0a0a0a" stroke-width="1.2"/>
<path d="M317.200 193.800l2.200-4" fill="none" stroke="#8a3a9a" stroke-width="3" stroke-linecap="round"/>
<path d="M310.500 196l3.500 4.500 2.500-2h3l1 4.500 2-5.500 1.500-1.500" fill="none" stroke="#0a0a0a" stroke-width="1.5"/>
<path d="M313.300 197.500l1.800 2.300" fill="none" stroke="#3aa88a" stroke-width="1.8"/>
<path d="M321 196.300l1.500-1" fill="none" stroke="#e8d06a" stroke-width="1.8"/>
<text x="345" y="196.8" font-size="18" fill="#3c3c3c" font-family='"Liberation Serif", "Noto Serif CJK SC", serif'>文件</text>
<text x="381.0" y="196.5" font-size="18" fill="#3c3c3c" font-family='"Liberation Mono", monospace' textLength="9" lengthAdjust="spacingAndGlyphs">(</text>
<text x="390.0" y="196.5" font-size="18" fill="#3c3c3c" font-family='"Liberation Mono", monospace' textLength="9" lengthAdjust="spacingAndGlyphs">F</text>
<line x1="390.5" y1="199.5" x2="398.5" y2="199.5" stroke="#3c3c3c" stroke-width="1"/>
<text x="399.0" y="196.5" font-size="18" fill="#3c3c3c" font-family='"Liberation Mono", monospace' textLength="9" lengthAdjust="spacingAndGlyphs">)</text>
<text x="426" y="196.8" font-size="18" fill="#3c3c3c" font-family='"Liberation Serif", "Noto Serif CJK SC", serif'>编辑</text>
<text x="462.0" y="196.5" font-size="18" fill="#3c3c3c" font-family='"Liberation Mono", monospace' textLength="9" lengthAdjust="spacingAndGlyphs">(</text>
<text x="471.0" y="196.5" font-size="18" fill="#3c3c3c" font-family='"Liberation Mono", monospace' textLength="9" lengthAdjust="spacingAndGlyphs">E</text>
<line x1="471.5" y1="199.5" x2="479.5" y2="199.5" stroke="#3c3c3c" stroke-width="1"/>
<text x="480.0" y="196.5" font-size="18" fill="#3c3c3c" font-family='"Liberation Mono", monospace' textLength="9" lengthAdjust="spacingAndGlyphs">)</text>
<text x="507.5" y="196.8" font-size="18" fill="#3c3c3c" font-family='"Liberation Serif", "Noto Serif CJK SC", serif'>视图</text>
<text x="543.5" y="196.5" font-size="18" fill="#3c3c3c" font-family='"Liberation Mono", monospace' textLength="9" lengthAdjust="spacingAndGlyphs">(</text>
<text x="552.5" y="196.5" font-size="18" fill="#3c3c3c" font-family='"Liberation Mono", monospace' textLength="9" lengthAdjust="spacingAndGlyphs">V</text>
<line x1="553.0" y1="199.5" x2="561.0" y2="199.5" stroke="#3c3c3c" stroke-width="1"/>
<text x="561.5" y="196.5" font-size="18" fill="#3c3c3c" font-family='"Liberation Mono", monospace' textLength="9" lengthAdjust="spacingAndGlyphs">)</text>
<text x="589" y="196.8" font-size="18" fill="#3c3c3c" font-family='"Liberation Serif", "Noto Serif CJK SC", serif'>插入</text>
<text x="625.0" y="196.5" font-size="18" fill="#3c3c3c" font-family='"Liberation Mono", monospace' textLength="9" lengthAdjust="spacingAndGlyphs">(</text>
<text x="634.0" y="196.5" font-size="18" fill="#3c3c3c" font-family='"Liberation Mono", monospace' textLength="9" lengthAdjust="spacingAndGlyphs">I</text>
<line x1="634.5" y1="199.5" x2="642.5" y2="199.5" stroke="#3c3c3c" stroke-width="1"/>
<text x="643.0" y="196.5" font-size="18" fill="#3c3c3c" font-family='"Liberation Mono", monospace' textLength="9" lengthAdjust="spacingAndGlyphs">)</text>
<text x="670" y="196.8" font-size="18" fill="#3c3c3c" font-family='"Liberation Serif", "Noto Serif CJK SC", serif'>格式</text>
<text x="706.0" y="196.5" font-size="18" fill="#3c3c3c" font-family='"Liberation Mono", monospace' textLength="9" lengthAdjust="spacingAndGlyphs">(</text>
<text x="715.0" y="196.5" font-size="18" fill="#3c3c3c" font-family='"Liberation Mono", monospace' textLength="9" lengthAdjust="spacingAndGlyphs">O</text>
<line x1="715.5" y1="199.5" x2="723.5" y2="199.5" stroke="#3c3c3c" stroke-width="1"/>
<text x="724.0" y="196.5" font-size="18" fill="#3c3c3c" font-family='"Liberation Mono", monospace' textLength="9" lengthAdjust="spacingAndGlyphs">)</text>
<text x="751.5" y="196.8" font-size="18" fill="#3c3c3c" font-family='"Liberation Serif", "Noto Serif CJK SC", serif'>调试</text>
<text x="787.5" y="196.5" font-size="18" fill="#3c3c3c" font-family='"Liberation Mono", monospace' textLength="9" lengthAdjust="spacingAndGlyphs">(</text>
<text x="796.5" y="196.5" font-size="18" fill="#3c3c3c" font-family='"Liberation Mono", monospace' textLength="9" lengthAdjust="spacingAndGlyphs">D</text>
<line x1="797.0" y1="199.5" x2="805.0" y2="199.5" stroke="#3c3c3c" stroke-width="1"/>
<text x="805.5" y="196.5" font-size="18" fill="#3c3c3c" font-family='"Liberation Mono", monospace' textLength="9" lengthAdjust="spacingAndGlyphs">)</text>
<text x="832.5" y="196.8" font-size="18" fill="#3c3c3c" font-family='"Liberation Serif", "Noto Serif CJK SC", serif'>运行</text>
<text x="868.5" y="196.5" font-size="18" fill="#3c3c3c" font-family='"Liberation Mono", monospace' textLength="9" lengthAdjust="spacingAndGlyphs">(</text>
<text x="877.5" y="196.5" font-size="18" fill="#3c3c3c" font-family='"Liberation Mono", monospace' textLength="9" lengthAdjust="spacingAndGlyphs">R</text>
<line x1="878.0" y1="199.5" x2="886.0" y2="199.5" stroke="#3c3c3c" stroke-width="1"/>
<text x="886.5" y="196.5" font-size="18" fill="#3c3c3c" font-family='"Liberation Mono", monospace' textLength="9" lengthAdjust="spacingAndGlyphs">)</text>
<text x="913" y="196.8" font-size="18" fill="#3c3c3c" font-family='"Liberation Serif", "Noto Serif CJK SC", serif'>工具</text>
<text x="949.0" y="196.5" font-size="18" fill="#3c3c3c" font-family='"Liberation Mono", monospace' textLength="9" lengthAdjust="spacingAndGlyphs">(</text>
<text x="958.0" y="196.5" font-size="18" fill="#3c3c3c" font-family='"Liberation Mono", monospace' textLength="9" lengthAdjust="spacingAndGlyphs">T</text>
<line x1="958.5" y1="199.5" x2="966.5" y2="199.5" stroke="#3c3c3c" stroke-width="1"/>
<text x="967.0" y="196.5" font-size="18" fill="#3c3c3c" font-family='"Liberation Mono", monospace' textLength="9" lengthAdjust="spacingAndGlyphs">)</text>
<text x="993" y="196.8" font-size="18" fill="#3c3c3c" font-family='"Liberation Serif", "Noto Serif CJK SC", serif'>外接程序</text>
<text x="1065.0" y="196.5" font-size="18" fill="#3c3c3c" font-family='"Liberation Mono", monospace' textLength="9" lengthAdjust="spacingAndGlyphs">(</text>
<text x="1074.0" y="196.5" font-size="18" fill="#3c3c3c" font-family='"Liberation Mono", monospace' textLength="9" lengthAdjust="spacingAndGlyphs">A</text>
<line x1="1074.5" y1="199.5" x2="1082.5" y2="199.5" stroke="#3c3c3c" stroke-width="1"/>
<text x="1083.0" y="196.5" font-size="18" fill="#3c3c3c" font-family='"Liberation Mono", monospace' textLength="9" lengthAdjust="spacingAndGlyphs">)</text>
<text x="1111" y="196.8" font-size="18" fill="#3c3c3c" font-family='"Liberation Serif", "Noto Serif CJK SC", serif'>窗口</text>
<text x="1147.0" y="196.5" font-size="18" fill="#3c3c3c" font-family='"Liberation Mono", monospace' textLength="9" lengthAdjust="spacingAndGlyphs">(</text>
<text x="1156.0" y="196.5" font-size="18" fill="#3c3c3c" font-family='"Liberation Mono", monospace' textLength="9" lengthAdjust="spacingAndGlyphs">W</text>
<line x1="1156.5" y1="199.5" x2="1164.5" y2="199.5" stroke="#3c3c3c" stroke-width="1"/>
<text x="1165.0" y="196.5" font-size="18" fill="#3c3c3c" font-family='"Liberation Mono", monospace' textLength="9" lengthAdjust="spacingAndGlyphs">)</text>
<text x="1192" y="196.8" font-size="18" fill="#3c3c3c" font-family='"Liberation Serif", "Noto Serif CJK SC", serif'>帮助</text>
<text x="1228.0" y="196.5" font-size="18" fill="#3c3c3c" font-family='"Liberation Mono", monospace' textLength="9" lengthAdjust="spacingAndGlyphs">(</text>
<text x="1237.0" y="196.5" font-size="18" fill="#3c3c3c" font-family='"Liberation Mono", monospace' textLength="9" lengthAdjust="spacingAndGlyphs">H</text>
<line x1="1237.5" y1="199.5" x2="1245.5" y2="199.5" stroke="#3c3c3c" stroke-width="1"/>
<text x="1246.0" y="196.5" font-size="18" fill="#3c3c3c" font-family='"Liberation Mono", monospace' textLength="9" lengthAdjust="spacingAndGlyphs">)</text>
<rect x="315.3" y="212.7" width="2.5" height="2.5" fill="#a9a9b2" rx="0.8"/>
<rect x="315.3" y="218.89999999999998" width="2.5" height="2.5" fill="#a9a9b2" rx="0.8"/>
<rect x="315.3" y="225.1" width="2.5" height="2.5" fill="#a9a9b2" rx="0.8"/>
<rect x="315.3" y="231.29999999999998" width="2.5" height="2.5" fill="#a9a9b2" rx="0.8"/>
<rect x="325.5" y="214" width="23" height="22.5" fill="#e8f3e6" stroke="#2c7a36" stroke-width="2.2"/>
<path d="M329.500 218.500l15 13.500M344.500 218.500l-15 13.500" fill="none" stroke="#2c8a3a" stroke-width="4"/>
<path d="M327.500 225.200h19M337 216v18.500" fill="none" stroke="#8fc79a" stroke-width="1"/>
<rect x="360.5" y="215" width="20.5" height="19" fill="#fff" stroke="#3c3c3c" stroke-width="1.7"/>
<rect x="361" y="215.5" width="19.5" height="3.8" fill="#4a4a4a"/>
<path d="M363.500 223h6M363.500 227h6M363.500 231h4" fill="none" stroke="#555" stroke-width="1.5"/>
<rect x="371" y="221.5" width="8" height="4" fill="#f0a24a"/>
<rect x="371" y="227.5" width="8" height="4.5" fill="#f0a24a"/>
<path d="M390.500 222h12l-6 6.500z" fill="#111"/>
<path d="M412.500 215h20.500v19.500h-18l-2.500-2.500z" fill="#4f5cc0" stroke="#343e98" stroke-width="1.2"/>
<rect x="416.5" y="215.5" width="12.5" height="8.5" fill="#e9ecfb"/>
<rect x="418" y="227.5" width="10" height="7" fill="#2a2f78"/>
<rect x="424" y="229" width="2.6" height="4.5" fill="#e0e3f8"/>
<line x1="442.2" y1="213" x2="442.2" y2="237" stroke="#c9c9cf" stroke-width="1.2"/>
<path d="M458 215l5.500 12M465.500 215l-5.500 12" fill="none" stroke="#bdbdbd" stroke-width="1.9"/>
<circle cx="458" cy="231" r="3" fill="none" stroke="#bdbdbd" stroke-width="1.8"/>
<circle cx="465.5" cy="231" r="3" fill="none" stroke="#bdbdbd" stroke-width="1.8"/>
<path d="M485.500 216h9l3 3v10h-12z" fill="#e3e3e3" stroke="#c3c3c3" stroke-width="1.2"/>
<path d="M493.500 221.500h9l3.500 3.500v10h-12.500z" fill="#ececec" stroke="#c3c3c3" stroke-width="1.2"/>
<path d="M496 227h7M496 230h7M496 233h7" fill="none" stroke="#cfcfcf" stroke-width="1"/>
<rect x="520" y="216.5" width="16" height="18" fill="#e2a520" stroke="#8a6512" stroke-width="1.3"/>
<rect x="524.5" y="214.5" width="7" height="4" fill="#c9c9c9" stroke="#555" stroke-width="1"/>
<path d="M529.500 223h9.500l4 4v8.500h-13.500z" fill="#f3f3f3" stroke="#3f3f3f" stroke-width="1.3"/>
<path d="M532 229h8M532 232h8" fill="none" stroke="#777" stroke-width="1.1"/>
<path d="M555 222l2.500-7.500h4l1 7.500v12h-9zM567 222l1-7.500h4l2.500 7.500v12h-9z" fill="#3e64b8" stroke="#27428a" stroke-width="1.1"/>
<rect x="561.5" y="221" width="6" height="5" fill="#2e4f9c"/>
<path d="M556 228.500h7M567 228.500h7" fill="none" stroke="#b9ccf0" stroke-width="1.6"/>
<line x1="584.5" y1="213" x2="584.5" y2="237" stroke="#c9c9cf" stroke-width="1.2"/>
<path d="M596 217.500l-1.500 9.500 9.500-1.500-3-2.500c3-2 6.500-1.500 7.500 1.500 1 3.500-1.500 7-5.500 10 7-1.500 11-6.500 9.500-12-1.500-5.500-9-7-14-2.500z" fill="#3d6fd0" stroke="#2a4fa0" stroke-width="0.9"/>
<path d="M646 217.500l1.500 9.500-9.500-1.500 3-2.500c-3-2-6.500-1.500-7.500 1.500-1 3.500 1.500 7 5.500 10-7-1.500-11-6.500-9.500-12 1.500-5.500 9-7 14-2.500z" fill="#d2d2d2" stroke="#c4c4c4" stroke-width="0.9"/>
<line x1="658.5" y1="213" x2="658.5" y2="237" stroke="#c9c9cf" stroke-width="1.2"/>
<path d="M674 218.500v13l8.500-6.500z" fill="#2ea12e" stroke="#1e7a1e" stroke-width="1"/>
<rect x="706" y="219" width="4" height="13" fill="#5f7fe0" stroke="#3a55b0" stroke-width="1"/>
<rect x="713" y="219" width="4" height="13" fill="#5f7fe0" stroke="#3a55b0" stroke-width="1"/>
<rect x="739.5" y="218.5" width="13.5" height="13.5" fill="url(#stp)" stroke="#3552b0" stroke-width="1"/>
<path d="M770 214.500v14.500h14z" fill="#5f8fe8" stroke="#2a4fa0" stroke-width="1.3"/>
<path d="M774 222v4h4z" fill="#e9f0ff"/>
<path d="M777.500 227.500l12.500-12 2.500 2.500-12.500 12-3.500 1z" fill="#e8b070" stroke="#7a4a1a" stroke-width="1"/>
<rect x="769" y="230.5" width="24" height="5" fill="#f0d060" stroke="#8a7020" stroke-width="1"/>
<path d="M772 230.500v2.500M775.500 230.500v2.500M779 230.500v2.500M782.500 230.500v2.500M786 230.500v2.500M789.500 230.500v2.500" fill="none" stroke="#6a5510" stroke-width="0.9"/>
<line x1="800.5" y1="213" x2="800.5" y2="237" stroke="#c9c9cf" stroke-width="1.2"/>
<path d="M810 219.500l9-4.500 7 3.500-9 4.500zM810 224.500l9-4.500 7 3.500-9 4.500zM811 229.500l9-4.500 7 3.500-9 4.500z" fill="#4f7fd8" stroke="#27428a" stroke-width="0.9"/>
<path d="M826.500 216l3.500 3.500-3.500 3.500-3.500-3.500zM826.500 226.500l3.500 3.500-3.500 3.500-3.500-3.500z" fill="#e8b060" stroke="#9a6a20" stroke-width="0.9"/>
<path d="M826.500 219.500v7" fill="none" stroke="#c23a2a" stroke-width="1.6"/>
<rect x="844.5" y="221.5" width="17" height="13.5" fill="#f4f6fb" stroke="#5a6a8a" stroke-width="1.3"/>
<rect x="845" y="222" width="16" height="3.4" fill="#5d8ad6"/>
<path d="M847 228.500h5.500M854.500 228.500h5M847 231.800h5.500M854.500 231.800h5" fill="none" stroke="#8a9ab8" stroke-width="1.3"/>
<path d="M852 221c1-4 4.500-6.500 8-5.500l-1.500 4 6.500 4-5 3.500z" fill="#e8c060" stroke="#8a6a20" stroke-width="0.9"/>
<rect x="861.5" y="214.5" width="5.5" height="13" fill="#6aa86a" stroke="#3a6a3a" stroke-width="0.8"/>
<path d="M880 224.500h18l-2 11h-14z" fill="#ecc850" stroke="#8a7020" stroke-width="1.1"/>
<path d="M880 224.500l-2.500-4 6-1.500 3 3.500M898 224.500l3-3.500-5-2.500-3.500 4" fill="#f3d878" stroke="#8a7020" stroke-width="1"/>
<circle cx="881" cy="215.5" r="2.3" fill="#7a4ab8"/>
<rect x="894" y="213.5" width="5" height="5" fill="#d8483a"/>
<path d="M886 216.500l5.500-2.800v5.600z" fill="#3a9a4a"/>
<path d="M916 218l5-3 4 4-2 2 9 9-2.500 2.500-9-9-2 2zM931 216l-5 5M926 226l-8 8" fill="none" stroke="#c6c6c6" stroke-width="2.4"/>
<line x1="941.8" y1="213" x2="941.8" y2="237" stroke="#c9c9cf" stroke-width="1.2"/>
<circle cx="962.6" cy="224.3" r="11.8" fill="url(#hlp)" stroke="#2a4f9c" stroke-width="0.8"/>
<text x="962.6" y="231.3" font-size="19" fill="#fff" font-weight="bold" text-anchor="middle">?</text>
<line x1="982" y1="213" x2="982" y2="237" stroke="#c9c9cf" stroke-width="1.2"/>
<text x="991.5" y="232.5" font-size="18" fill="#3c3c3c" font-family='"Liberation Serif", "Noto Serif CJK SC", serif'>行</text>
<text x="1018.5" y="232.5" font-size="18" fill="#3c3c3c" font-family='"Liberation Mono", monospace' textLength="9" lengthAdjust="spacingAndGlyphs">9</text>
<text x="1027.5" y="232.5" font-size="18" fill="#3c3c3c" font-family='"Liberation Mono", monospace'>,</text>
<text x="1045.5" y="232.5" font-size="18" fill="#3c3c3c" font-family='"Liberation Serif", "Noto Serif CJK SC", serif'>列</text>
<text x="1072.5" y="232.5" font-size="18" fill="#3c3c3c" font-family='"Liberation Mono", monospace' textLength="18" lengthAdjust="spacingAndGlyphs">39</text>
<path d="M1272.500 208.500h13q3 0 3 3v33.500h-16z" fill="url(#ovf)"/>
<path d="M1275.500 231h10" fill="none" stroke="#111" stroke-width="1.6"/>
<path d="M1275 234h11l-5.500 5.700z" fill="#111"/>
<rect x="293" y="245" width="341" height="33" fill="#f4f4f6"/>
<rect x="293" y="245" width="308.5" height="33" fill="#bfccde"/>
<rect x="293" y="245" width="308.5" height="1.5" fill="#b4bac7"/>
<rect x="293" y="276.5" width="308.5" height="1.5" fill="#b9c4d3"/>
<text x="294.5" y="262.5" font-size="17.5" fill="#151515">工程</text>
<text x="333.5" y="262.3" font-size="16.4" fill="#151515" textLength="86" lengthAdjust="spacingAndGlyphs">- VBAProject</text>
<rect x="602" y="246.5" width="30" height="29.5" fill="#efefef"/>
<path d="M602.500 276v-29.500h29.500" fill="none" stroke="#fdfdfd" stroke-width="1.2"/>
<path d="M602.500 276.300h29.700v-29.500" fill="none" stroke="#9c9c9c" stroke-width="1.4"/>
<path d="M609.500 252l18 18M627.500 252l-18 18" fill="none" stroke="#0a0a0a" stroke-width="3.4"/>
<rect x="293" y="278" width="341" height="40" fill="#f8f8fb"/>
<rect x="305.5" y="288.5" width="20.5" height="17" fill="#e7ecf8" stroke="#5b6fa8" stroke-width="1.5"/>
<rect x="306" y="289" width="19.5" height="3.5" fill="#5f7fc8"/>
<path d="M309 296h5M316.500 296h6M309 299.500h5M316.500 299.500h6M309 303h5M316.500 303h6" fill="none" stroke="#d8863a" stroke-width="1.5"/>
<rect x="338.5" y="288.5" width="21.5" height="17" fill="#e4e9f6" stroke="#5b6fa8" stroke-width="1.5"/>
<rect x="339" y="289" width="20.5" height="3.5" fill="#5f7fc8"/>
<rect x="342" y="295" width="6" height="3" fill="#fff" stroke="#6a7aa8" stroke-width="1"/>
<rect x="351" y="295" width="6" height="3" fill="#fff" stroke="#6a7aa8" stroke-width="1"/>
<rect x="342" y="300.5" width="6" height="3" fill="#fff" stroke="#6a7aa8" stroke-width="1"/>
<rect x="351" y="300.5" width="6" height="3" fill="#fff" stroke="#6a7aa8" stroke-width="1"/>
<rect x="373" y="281.5" width="34" height="32" fill="#d9ebf9" stroke="#5fa2dd" stroke-width="1.2"/>
<path d="M378.500 289h8l2 2.500h11.500v14h-21.500z" fill="url(#fld)" stroke="#9a7a3a" stroke-width="1.1"/>
<line x1="633" y1="277" x2="633" y2="318" stroke="#e2e2e2" stroke-width="1"/>
<path d="M617 280.500h13q3 0 3 3v33.500h-16z" fill="url(#ovf)"/>
<path d="M620 303h10" fill="none" stroke="#111" stroke-width="1.6"/>
<path d="M619.500 306h11l-5.500 5.700z" fill="#111"/>
<rect x="294" y="319" width="340" height="727.5" fill="#fff"/>
<rect x="293.5" y="318.5" width="341" height="1.5" fill="#8a8a8a"/>
<rect x="293.8" y="319" width="1.3" height="756" fill="#5c5c5c"/>
<rect x="633.5" y="319" width="1" height="753" fill="#c8c8c8"/>
<line x1="310.5" y1="340" x2="310.5" y2="470" stroke="#9a9a9a" stroke-width="1" stroke-dasharray="1 2"/>
<line x1="337.5" y1="343" x2="337.5" y2="429" stroke="#9a9a9a" stroke-width="1" stroke-dasharray="1 2"/>
<line x1="344" y1="357.5" x2="353" y2="357.5" stroke="#9a9a9a" stroke-width="1" stroke-dasharray="1 2"/>
<line x1="344" y1="429.5" x2="353" y2="429.5" stroke="#9a9a9a" stroke-width="1" stroke-dasharray="1 2"/>
<line x1="364.5" y1="367" x2="364.5" y2="405.5" stroke="#9a9a9a" stroke-width="1" stroke-dasharray="1 2"/>
<line x1="364.5" y1="381.5" x2="380" y2="381.5" stroke="#9a9a9a" stroke-width="1" stroke-dasharray="1 2"/>
<line x1="364.5" y1="405.5" x2="380" y2="405.5" stroke="#9a9a9a" stroke-width="1" stroke-dasharray="1 2"/>
<line x1="364.5" y1="439" x2="364.5" y2="453.5" stroke="#9a9a9a" stroke-width="1" stroke-dasharray="1 2"/>
<line x1="364.5" y1="453.5" x2="380" y2="453.5" stroke="#9a9a9a" stroke-width="1" stroke-dasharray="1 2"/>
<line x1="337.5" y1="487" x2="337.5" y2="573" stroke="#9a9a9a" stroke-width="1" stroke-dasharray="1 2"/>
<line x1="344" y1="501.5" x2="353" y2="501.5" stroke="#9a9a9a" stroke-width="1" stroke-dasharray="1 2"/>
<line x1="344" y1="573.5" x2="353" y2="573.5" stroke="#9a9a9a" stroke-width="1" stroke-dasharray="1 2"/>
<line x1="364.5" y1="511" x2="364.5" y2="549.5" stroke="#9a9a9a" stroke-width="1" stroke-dasharray="1 2"/>
<line x1="364.5" y1="525.5" x2="380" y2="525.5" stroke="#9a9a9a" stroke-width="1" stroke-dasharray="1 2"/>
<line x1="364.5" y1="549.5" x2="380" y2="549.5" stroke="#9a9a9a" stroke-width="1" stroke-dasharray="1 2"/>
<line x1="364.5" y1="583" x2="364.5" y2="597.5" stroke="#9a9a9a" stroke-width="1" stroke-dasharray="1 2"/>
<line x1="364.5" y1="597.5" x2="380" y2="597.5" stroke="#9a9a9a" stroke-width="1" stroke-dasharray="1 2"/>
<clipPath id="tcl"><rect x="294" y="319" width="339" height="728"/></clipPath><g clip-path="url(#tcl)">
<rect x="304.0" y="327.0" width="13" height="13" fill="#fdfdfd" stroke="#9a9a9a" stroke-width="1"/>
<line x1="307.0" y1="333.5" x2="314.0" y2="333.5" stroke="#555" stroke-width="1.3"/>
<path d="M329 333.500l8-4 8 4-8 4.500z" fill="#cfe6f2" stroke="#111" stroke-width="1.2"/>
<path d="M329 337.500l8 4.500 8-4.500" fill="none" stroke="#111" stroke-width="1.3" stroke-dasharray="2 1.200"/>
<rect x="328" y="325.5" width="4.5" height="4.5" fill="#fff" stroke="#111" stroke-width="1.3"/>
<rect x="333" y="322.0" width="4.5" height="4.5" fill="#fff" stroke="#111" stroke-width="1.3"/>
<rect x="338" y="326.5" width="4.5" height="4.5" fill="#fff" stroke="#111" stroke-width="1.3"/>
<rect x="332.5" y="329.5" width="4.5" height="4.5" fill="#fff" stroke="#111" stroke-width="1.3"/>
<rect x="342" y="321.5" width="4.5" height="4.5" fill="#fff" stroke="#111" stroke-width="1.3"/>
<path d="M330 327.500l5-3.500 5 4.500-5.500 3zM340 328.500l4-5" fill="none" stroke="#111" stroke-width="1"/>
<text x="354.5" y="339.0" font-size="18" fill="#111" font-family='"Liberation Mono", monospace' font-weight="bold" textLength="150" lengthAdjust="spacingAndGlyphs">VBAProject (59.</text>
<text x="505" y="339.5" font-size="18" font-weight="bold" letter-spacing="1" fill="#111" font-family='"Liberation Serif", "Noto Serif CJK SC", serif'>字典：制作三级</text>
<rect x="331.0" y="351.0" width="13" height="13" fill="#fdfdfd" stroke="#9a9a9a" stroke-width="1"/>
<line x1="334.0" y1="357.5" x2="341.0" y2="357.5" stroke="#555" stroke-width="1.3"/>
<path d="M354 352.0h6l2-2.500h7l1.500 2.500h3v4" fill="#f4eeb0" stroke="#555" stroke-width="1.1"/>
<path d="M353.500 355.500h17.500l2.500 9h-17.500z" fill="#e9df7a" stroke="#4a4a2a" stroke-width="1.1"/>
<path d="M371 355.500l3.500 1v8" fill="none" stroke="#222" stroke-width="1.8"/>
<text x="381" y="363.0" font-size="18" fill="#333" font-family='"Liberation Mono", monospace' textLength="144" lengthAdjust="spacingAndGlyphs" xml:space="preserve">Microsoft Excel </text>
<text x="525" y="363.5" font-size="18" fill="#333" font-family='"Liberation Serif", "Noto Serif CJK SC", serif'>对象</text>
<path d="M386.500 371.0h12l4 4v15h-16z" fill="#fff" stroke="#333" stroke-width="1.1"/>
<rect x="381.0" y="374.5" width="15" height="14" fill="#fff" stroke="#111" stroke-width="1.5"/>
<path d="M381.0 378.0h15M381.0 381.500h15M381.0 385.0h15M386.0 374.500v14M391.0 374.500v14" fill="none" stroke="#111" stroke-width="1.7"/>
<text x="408.5" y="387.0" font-size="18" fill="#333" font-family='"Liberation Mono", monospace' textLength="135" lengthAdjust="spacingAndGlyphs">Sheet1 (Sheet1)</text>
<path d="M385 394.500h12l4.500 4.500v16h-16.500z" fill="#fff" stroke="#111" stroke-width="1.5"/>
<path d="M397 394.500v4.500h4.500" fill="none" stroke="#111" stroke-width="1.2"/>
<path d="M381 402.500l10 10M391 402.500l-10 10" fill="none" stroke="#2c8a3a" stroke-width="3.2" stroke-dasharray="2.500 1"/>
<text x="408.5" y="411.0" font-size="18" fill="#333" font-family='"Liberation Mono", monospace' textLength="108" lengthAdjust="spacingAndGlyphs">ThisWorkbook</text>
<rect x="331.0" y="423.0" width="13" height="13" fill="#fdfdfd" stroke="#9a9a9a" stroke-width="1"/>
<line x1="334.0" y1="429.5" x2="341.0" y2="429.5" stroke="#555" stroke-width="1.3"/>
<path d="M354 424.0h6l2-2.500h7l1.500 2.500h3v4" fill="#f4eeb0" stroke="#555" stroke-width="1.1"/>
<path d="M353.500 427.500h17.500l2.500 9h-17.500z" fill="#e9df7a" stroke="#4a4a2a" stroke-width="1.1"/>
<path d="M371 427.500l3.500 1v8" fill="none" stroke="#222" stroke-width="1.8"/>
<text x="381" y="435.5" font-size="18" fill="#333" font-family='"Liberation Serif", "Noto Serif CJK SC", serif'>窗体</text>
<rect x="381" y="444.0" width="19.5" height="19" fill="#fff" stroke="#15153a" stroke-width="2"/>
<rect x="381.5" y="444.5" width="18.5" height="3.5" fill="#15153a"/>
<path d="M384.500 452.500h4M384.500 457.500h4" fill="none" stroke="#111" stroke-width="1.8"/>
<rect x="391" y="450.5" width="6" height="3.5" fill="#fff" stroke="#111" stroke-width="1.3"/>
<rect x="391" y="456.0" width="6" height="3.5" fill="#fff" stroke="#111" stroke-width="1.3"/>
<text x="408.5" y="459.0" font-size="18" fill="#333" font-family='"Liberation Mono", monospace' textLength="81" lengthAdjust="spacingAndGlyphs">UserForm1</text>
<rect x="304.0" y="471.0" width="13" height="13" fill="#fdfdfd" stroke="#9a9a9a" stroke-width="1"/>
<line x1="307.0" y1="477.5" x2="314.0" y2="477.5" stroke="#555" stroke-width="1.3"/>
<path d="M329 477.500l8-4 8 4-8 4.500z" fill="#cfe6f2" stroke="#111" stroke-width="1.2"/>
<path d="M329 481.500l8 4.500 8-4.500" fill="none" stroke="#111" stroke-width="1.3" stroke-dasharray="2 1.200"/>
<rect x="328" y="469.5" width="4.5" height="4.5" fill="#fff" stroke="#111" stroke-width="1.3"/>
<rect x="333" y="466.0" width="4.5" height="4.5" fill="#fff" stroke="#111" stroke-width="1.3"/>
<rect x="338" y="470.5" width="4.5" height="4.5" fill="#fff" stroke="#111" stroke-width="1.3"/>
<rect x="332.5" y="473.5" width="4.5" height="4.5" fill="#fff" stroke="#111" stroke-width="1.3"/>
<rect x="342" y="465.5" width="4.5" height="4.5" fill="#fff" stroke="#111" stroke-width="1.3"/>
<path d="M330 471.500l5-3.500 5 4.500-5.500 3zM340 472.500l4-5" fill="none" stroke="#111" stroke-width="1"/>
<text x="354.5" y="483.0" font-size="18" fill="#111" font-family='"Liberation Mono", monospace' font-weight="bold" textLength="120" lengthAdjust="spacingAndGlyphs">VBAProject (</text>
<text x="475" y="483.5" font-size="18" font-weight="bold" letter-spacing="1" fill="#111" font-family='"Liberation Serif", "Noto Serif CJK SC", serif'>工作簿</text>
<text x="531.5" y="483.0" font-size="18" fill="#111" font-family='"Liberation Mono", monospace' font-weight="bold" textLength="70" lengthAdjust="spacingAndGlyphs">1.xlsm)</text>
<rect x="331.0" y="495.0" width="13" height="13" fill="#fdfdfd" stroke="#9a9a9a" stroke-width="1"/>
<line x1="334.0" y1="501.5" x2="341.0" y2="501.5" stroke="#555" stroke-width="1.3"/>
<path d="M354 496.0h6l2-2.500h7l1.500 2.500h3v4" fill="#f4eeb0" stroke="#555" stroke-width="1.1"/>
<path d="M353.500 499.500h17.500l2.500 9h-17.500z" fill="#e9df7a" stroke="#4a4a2a" stroke-width="1.1"/>
<path d="M371 499.500l3.500 1v8" fill="none" stroke="#222" stroke-width="1.8"/>
<text x="381" y="507.0" font-size="18" fill="#333" font-family='"Liberation Mono", monospace' textLength="144" lengthAdjust="spacingAndGlyphs" xml:space="preserve">Microsoft Excel </text>
<text x="525" y="507.5" font-size="18" fill="#333" font-family='"Liberation Serif", "Noto Serif CJK SC", serif'>对象</text>
<rect x="405.5" y="514.0" width="139" height="22.5" fill="#f0f0f0"/>
<path d="M386.500 515.0h12l4 4v15h-16z" fill="#fff" stroke="#333" stroke-width="1.1"/>
<rect x="381.0" y="518.5" width="15" height="14" fill="#fff" stroke="#111" stroke-width="1.5"/>
<path d="M381.0 522.0h15M381.0 525.500h15M381.0 529.0h15M386.0 518.500v14M391.0 518.500v14" fill="none" stroke="#111" stroke-width="1.7"/>
<text x="408.5" y="531.0" font-size="18" fill="#333" font-family='"Liberation Mono", monospace' textLength="135" lengthAdjust="spacingAndGlyphs">Sheet1 (Sheet1)</text>
<path d="M385 538.500h12l4.500 4.500v16h-16.500z" fill="#fff" stroke="#111" stroke-width="1.5"/>
<path d="M397 538.500v4.500h4.500" fill="none" stroke="#111" stroke-width="1.2"/>
<path d="M381 546.500l10 10M391 546.500l-10 10" fill="none" stroke="#2c8a3a" stroke-width="3.2" stroke-dasharray="2.500 1"/>
<text x="408.5" y="555.0" font-size="18" fill="#333" font-family='"Liberation Mono", monospace' textLength="108" lengthAdjust="spacingAndGlyphs">ThisWorkbook</text>
<rect x="331.0" y="567.0" width="13" height="13" fill="#fdfdfd" stroke="#9a9a9a" stroke-width="1"/>
<line x1="334.0" y1="573.5" x2="341.0" y2="573.5" stroke="#555" stroke-width="1.3"/>
<path d="M354 568.0h6l2-2.500h7l1.500 2.500h3v4" fill="#f4eeb0" stroke="#555" stroke-width="1.1"/>
<path d="M353.500 571.500h17.500l2.500 9h-17.500z" fill="#e9df7a" stroke="#4a4a2a" stroke-width="1.1"/>
<path d="M371 571.500l3.500 1v8" fill="none" stroke="#222" stroke-width="1.8"/>
<text x="381" y="579.5" font-size="18" fill="#333" font-family='"Liberation Serif", "Noto Serif CJK SC", serif'>窗体</text>
<rect x="381" y="588.0" width="19.5" height="19" fill="#fff" stroke="#15153a" stroke-width="2"/>
<rect x="381.5" y="588.5" width="18.5" height="3.5" fill="#15153a"/>
<path d="M384.500 596.500h4M384.500 601.500h4" fill="none" stroke="#111" stroke-width="1.8"/>
<rect x="391" y="594.5" width="6" height="3.5" fill="#fff" stroke="#111" stroke-width="1.3"/>
<rect x="391" y="600.0" width="6" height="3.5" fill="#fff" stroke="#111" stroke-width="1.3"/>
<text x="408.5" y="603.0" font-size="18" fill="#333" font-family='"Liberation Mono", monospace' textLength="81" lengthAdjust="spacingAndGlyphs">UserForm1</text>
</g>
<rect x="295" y="1047.5" width="339" height="24.5" fill="#f0f0f0"/>
<rect x="321" y="1047.5" width="200.5" height="24.5" fill="#cbcbcb"/>
<path d="M311.500 1054l-7.500 6 7.500 6" fill="none" stroke="#404040" stroke-width="2.7"/>
<path d="M614 1054l7.500 6-7.500 6" fill="none" stroke="#404040" stroke-width="2.7"/>
<rect x="295" y="1072" width="1640" height="3.5" fill="#fff"/>
<rect x="293" y="1075.5" width="1640" height="1.2" fill="#c4c4c4"/>
<rect x="293" y="1076.7" width="1640" height="4" fill="#eaeaea"/>
<rect x="634" y="248" width="1300" height="30" fill="#f0f0f0"/>
<rect x="634" y="248" width="9" height="826" fill="#f0f0f0"/>
<rect x="640.8" y="245.5" width="1.9" height="830" fill="#7a7a7a"/>
<rect x="651.5" y="249.5" width="767.5" height="25.5" fill="#fff" stroke="#7a7a7a" stroke-width="1"/>
<rect x="1430.5" y="249.5" width="500" height="25.5" fill="#fff" stroke="#7a7a7a" stroke-width="1"/>
<text x="649.5" y="267.3" font-size="18" font-weight="bold" fill="#111" font-family='"Liberation Serif", "Noto Serif CJK SC", serif'>（</text>
<text x="666.5" y="267.8" font-size="18" font-weight="bold" letter-spacing="0.8" fill="#111" font-family='"Liberation Serif", "Noto Serif CJK SC", serif'>通用</text>
<text x="704.5" y="267.3" font-size="18" font-weight="bold" fill="#111" font-family='"Liberation Serif", "Noto Serif CJK SC", serif'>）</text>
<path d="M1400.500 259.500l5.500 5.500 5.500-5.500" fill="none" stroke="#444" stroke-width="1.4"/>
<text x="1435" y="267.3" font-size="18" fill="#111" font-family='"Liberation Mono", monospace' font-weight="bold" textLength="39" lengthAdjust="spacingAndGlyphs">test</text>
<rect x="644" y="278.5" width="1290" height="768" fill="#fff"/>
<rect x="643" y="277" width="1290" height="1.5" fill="#6e6e6e"/>
<rect x="644" y="278.5" width="31" height="794" fill="#f0f0f0"/>
<rect x="675" y="278.5" width="1.2" height="768" fill="#111"/>
<rect x="676" y="1046.5" width="1260" height="29" fill="#f0f0f0"/>
<rect x="722" y="1046.5" width="122" height="25" fill="#cdcdcd"/>
<path d="M713 1052l-7 6 7 6" fill="none" stroke="#404040" stroke-width="2.6"/>
<path d="M644.500 1046v25.500h22l2.500-25.500" fill="#f4f4f4" stroke="#555" stroke-width="1.2"/>
<path d="M651 1053h9M653.500 1056h6.500" fill="none" stroke="#111" stroke-width="1.3"/>
<rect x="669" y="1046" width="23.5" height="26" fill="#f7f7f7"/>
<path d="M668.500 1072l2.500-26.500h21" fill="none" stroke="#666" stroke-width="1.2"/>
<path d="M677 1053.500h10M680 1056.500h7M677 1059.500h10M680 1062.500h7" fill="none" stroke="#111" stroke-width="1.3"/>
<text x="687.3" y="309.3" font-size="28.333" fill="#0b1466" font-family='"Liberation Mono", monospace' textLength="51.0" lengthAdjust="spacingAndGlyphs" stroke="#0b1466" stroke-width="0.2">Sub</text>
<text x="755.3" y="309.3" font-size="28.333" fill="#0c0c0c" font-family='"Liberation Mono", monospace' textLength="102.0" lengthAdjust="spacingAndGlyphs" stroke="#0c0c0c" stroke-width="0.2">test()</text>
<text x="755.3" y="346.3" font-size="28.333" fill="#0b1466" font-family='"Liberation Mono", monospace' textLength="51.0" lengthAdjust="spacingAndGlyphs" stroke="#0b1466" stroke-width="0.2">Dim</text>
<text x="823.3" y="346.3" font-size="28.333" fill="#0c0c0c" font-family='"Liberation Mono", monospace' textLength="85.0" lengthAdjust="spacingAndGlyphs" stroke="#0c0c0c" stroke-width="0.2">arr()</text>
<text x="755.3" y="383.3" font-size="28.333" fill="#0b1466" font-family='"Liberation Mono", monospace' textLength="51.0" lengthAdjust="spacingAndGlyphs" stroke="#0b1466" stroke-width="0.2">Dim</text>
<text x="823.3" y="383.3" font-size="28.333" fill="#0c0c0c" font-family='"Liberation Mono", monospace' textLength="51.0" lengthAdjust="spacingAndGlyphs" stroke="#0c0c0c" stroke-width="0.2">dic</text>
<text x="891.3" y="383.3" font-size="28.333" fill="#0b1466" font-family='"Liberation Mono", monospace' textLength="34.0" lengthAdjust="spacingAndGlyphs" stroke="#0b1466" stroke-width="0.2">As</text>
<text x="942.3" y="383.3" font-size="28.333" fill="#0b1466" font-family='"Liberation Mono", monospace' textLength="51.0" lengthAdjust="spacingAndGlyphs" stroke="#0b1466" stroke-width="0.2">New</text>
<text x="1010.3" y="383.3" font-size="28.333" fill="#0c0c0c" font-family='"Liberation Mono", monospace' textLength="170.0" lengthAdjust="spacingAndGlyphs" stroke="#0c0c0c" stroke-width="0.2">Dictionary</text>
<text x="755.3" y="420.3" font-size="28.333" fill="#0c0c0c" font-family='"Liberation Mono", monospace' textLength="799.0" lengthAdjust="spacingAndGlyphs" stroke="#0c0c0c" stroke-width="0.2">last_row = Sheet1.Range("A65536").End(xlUp).Row</text>
<text x="755.3" y="457.3" font-size="28.333" fill="#0c0c0c" font-family='"Liberation Mono", monospace' textLength="629.0" lengthAdjust="spacingAndGlyphs" stroke="#0c0c0c" stroke-width="0.2">arr = Sheet1.Range("A2:C" &amp; last_row)</text>
<text x="755.3" y="494.3" font-size="28.333" fill="#0b1466" font-family='"Liberation Mono", monospace' textLength="51.0" lengthAdjust="spacingAndGlyphs" stroke="#0b1466" stroke-width="0.2">For</text>
<text x="823.3" y="494.3" font-size="28.333" fill="#0c0c0c" font-family='"Liberation Mono", monospace' textLength="51.0" lengthAdjust="spacingAndGlyphs" stroke="#0c0c0c" stroke-width="0.2">i =</text>
<text x="891.3" y="494.3" font-size="28.333" fill="#0b1466" font-family='"Liberation Mono", monospace' textLength="119.0" lengthAdjust="spacingAndGlyphs" stroke="#0b1466" stroke-width="0.2">LBound(</text>
<text x="1010.3" y="494.3" font-size="28.333" fill="#0c0c0c" font-family='"Liberation Mono", monospace' textLength="51.0" lengthAdjust="spacingAndGlyphs" stroke="#0c0c0c" stroke-width="0.2">arr</text>
<text x="1061.3" y="494.3" font-size="28.333" fill="#0b1466" font-family='"Liberation Mono", monospace' textLength="17.0" lengthAdjust="spacingAndGlyphs" stroke="#0b1466" stroke-width="0.2">)</text>
<text x="1095.3" y="494.3" font-size="28.333" fill="#0b1466" font-family='"Liberation Mono", monospace' textLength="34.0" lengthAdjust="spacingAndGlyphs" stroke="#0b1466" stroke-width="0.2">To</text>
<text x="1146.3" y="494.3" font-size="28.333" fill="#0b1466" font-family='"Liberation Mono", monospace' textLength="119.0" lengthAdjust="spacingAndGlyphs" stroke="#0b1466" stroke-width="0.2">UBound(</text>
<text x="1265.3" y="494.3" font-size="28.333" fill="#0c0c0c" font-family='"Liberation Mono", monospace' textLength="51.0" lengthAdjust="spacingAndGlyphs" stroke="#0c0c0c" stroke-width="0.2">arr</text>
<text x="1316.3" y="494.3" font-size="28.333" fill="#0b1466" font-family='"Liberation Mono", monospace' textLength="17.0" lengthAdjust="spacingAndGlyphs" stroke="#0b1466" stroke-width="0.2">)</text>
<text x="823.3" y="531.3" font-size="28.333" fill="#0c0c0c" font-family='"Liberation Mono", monospace' textLength="323.0" lengthAdjust="spacingAndGlyphs" stroke="#0c0c0c" stroke-width="0.2">dic(arr(i, 1)) = ""</text>
<text x="755.3" y="568.3" font-size="28.333" fill="#0b1466" font-family='"Liberation Mono", monospace' textLength="68.0" lengthAdjust="spacingAndGlyphs" stroke="#0b1466" stroke-width="0.2">Next</text>
<text x="755.3" y="605.3" font-size="28.333" fill="#0c0c0c" font-family='"Liberation Mono", monospace' textLength="578.0" lengthAdjust="spacingAndGlyphs" stroke="#0c0c0c" stroke-width="0.2">userform1.ListBox1.List = dic.keys</text>
<text x="687.3" y="642.3" font-size="28.333" fill="#0b1466" font-family='"Liberation Mono", monospace' textLength="119.0" lengthAdjust="spacingAndGlyphs" stroke="#0b1466" stroke-width="0.2">End Sub</text>
<rect x="1332.7" y="576.5" width="1.6" height="37" fill="#111"/>
<circle cx="1623.7" cy="368.2" r="11.3" fill="#f7150b" stroke="#5a1a14" stroke-width="1"/>
<rect x="1237.5" y="621" width="175" height="145" fill="#000" opacity="0.18"/>
<rect x="1235.5" y="614" width="175" height="149" fill="#fff" stroke="#dcdcdc" stroke-width="1"/>
<path d="M1410.500 614v149h-175" fill="none" stroke="#7a7a7a" stroke-width="1.4"/>
<clipPath id="pcl"><rect x="1236.5" y="621.5" width="173" height="143"/></clipPath><g clip-path="url(#pcl)">
<path d="M1249 623.500l5.500-3.500 8 4.500v3.500l-5.500 3.500-8-4.500z" fill="#5fae3a" stroke="#111" stroke-width="1.1"/>
<path d="M1249 623.500l8 4.500 5.500-3.500M1257 628.0v3.500" fill="none" stroke="#111" stroke-width="1"/>
<path d="M1239.500 625.0h6M1241.500 628.0h5M1239.500 631.0h7" fill="none" stroke="#8a8a8a" stroke-width="1.3" stroke-dasharray="2 1"/>
<text x="1268" y="631.5" font-size="18" fill="#333" font-family='"Liberation Mono", monospace' textLength="54" lengthAdjust="spacingAndGlyphs">Exists</text>
<path d="M1239.500 644.0h13v13h-13z" fill="#fff" stroke="#111" stroke-width="1.2"/>
<path d="M1242 648.500h8M1242 651.500h8M1242 654.500h6" fill="none" stroke="#333" stroke-width="1.1"/>
<path d="M1241 644.0l3-5.500h13l-2.500 5.500z" fill="#d9d9d9" stroke="#111" stroke-width="1.1"/>
<path d="M1258.500 638.0v9" fill="none" stroke="#14148a" stroke-width="2.4"/>
<path d="M1245 641.0h8" fill="none" stroke="#555" stroke-width="1.1" stroke-dasharray="1.500 1"/>
<text x="1268" y="652.5" font-size="18" fill="#333" font-family='"Liberation Mono", monospace' textLength="36" lengthAdjust="spacingAndGlyphs">Item</text>
<path d="M1249 665.500l5.500-3.500 8 4.500v3.500l-5.500 3.500-8-4.500z" fill="#5fae3a" stroke="#111" stroke-width="1.1"/>
<path d="M1249 665.500l8 4.500 5.500-3.500M1257 670.0v3.500" fill="none" stroke="#111" stroke-width="1"/>
<path d="M1239.500 667.0h6M1241.500 670.0h5M1239.500 673.0h7" fill="none" stroke="#8a8a8a" stroke-width="1.3" stroke-dasharray="2 1"/>
<text x="1268" y="673.5" font-size="18" fill="#333" font-family='"Liberation Mono", monospace' textLength="45" lengthAdjust="spacingAndGlyphs">Items</text>
<path d="M1239.500 686.0h13v13h-13z" fill="#fff" stroke="#111" stroke-width="1.2"/>
<path d="M1242 690.500h8M1242 693.500h8M1242 696.500h6" fill="none" stroke="#333" stroke-width="1.1"/>
<path d="M1241 686.0l3-5.500h13l-2.500 5.500z" fill="#d9d9d9" stroke="#111" stroke-width="1.1"/>
<path d="M1258.500 680.0v9" fill="none" stroke="#14148a" stroke-width="2.4"/>
<path d="M1245 683.0h8" fill="none" stroke="#555" stroke-width="1.1" stroke-dasharray="1.500 1"/>
<text x="1268" y="694.5" font-size="18" fill="#333" font-family='"Liberation Mono", monospace' textLength="27" lengthAdjust="spacingAndGlyphs">Key</text>
<rect x="1266" y="699.7" width="117.5" height="20.6" fill="#0a64d6"/>
<rect x="1266.5" y="700.2" width="116.5" height="19.6" fill="none" stroke="#f5d9a0" stroke-width="1" stroke-dasharray="1 1.500"/>
<path d="M1249 707.500l5.500-3.500 8 4.500v3.500l-5.500 3.500-8-4.500z" fill="#5fae3a" stroke="#111" stroke-width="1.1"/>
<path d="M1249 707.500l8 4.500 5.500-3.500M1257 712.0v3.500" fill="none" stroke="#111" stroke-width="1"/>
<path d="M1239.500 709.0h6M1241.500 712.0h5M1239.500 715.0h7" fill="none" stroke="#8a8a8a" stroke-width="1.3" stroke-dasharray="2 1"/>
<text x="1268" y="715.5" font-size="18" fill="#e8ffff" font-family='"Liberation Mono", monospace' textLength="36" lengthAdjust="spacingAndGlyphs">Keys</text>
<path d="M1249 728.500l5.500-3.500 8 4.500v3.500l-5.500 3.500-8-4.500z" fill="#5fae3a" stroke="#111" stroke-width="1.1"/>
<path d="M1249 728.500l8 4.500 5.500-3.500M1257 733.0v3.500" fill="none" stroke="#111" stroke-width="1"/>
<path d="M1239.500 730.0h6M1241.500 733.0h5M1239.500 736.0h7" fill="none" stroke="#8a8a8a" stroke-width="1.3" stroke-dasharray="2 1"/>
<text x="1268" y="736.5" font-size="18" fill="#333" font-family='"Liberation Mono", monospace' textLength="54" lengthAdjust="spacingAndGlyphs">Remove</text>
<path d="M1249 749.500l5.500-3.500 8 4.500v3.500l-5.500 3.500-8-4.500z" fill="#5fae3a" stroke="#111" stroke-width="1.1"/>
<path d="M1249 749.500l8 4.500 5.500-3.500M1257 754.0v3.500" fill="none" stroke="#111" stroke-width="1"/>
<path d="M1239.500 751.0h6M1241.500 754.0h5M1239.500 757.0h7" fill="none" stroke="#8a8a8a" stroke-width="1.3" stroke-dasharray="2 1"/>
<text x="1268" y="757.5" font-size="18" fill="#333" font-family='"Liberation Mono", monospace' textLength="81" lengthAdjust="spacingAndGlyphs">RemoveAll</text>
</g>
<rect x="1384.5" y="621.5" width="25" height="140" fill="#f0f0f0"/>
<rect x="1385.5" y="670" width="23" height="66.5" fill="#c4c4c4"/>
<path d="M1391.500 635l6-6 6 6" fill="none" stroke="#555" stroke-width="2"/>
<path d="M1391.500 746l6 6 6-6" fill="none" stroke="#555" stroke-width="2"/>
<rect x="734.5" y="548.3" width="757.5" height="72" fill="none" stroke="#f5130d" stroke-width="3.2" rx="2"/>
<clipPath id="wmt"><rect x="1600" y="0" width="320" height="52"/></clipPath>
<clipPath id="wmb"><rect x="1600" y="52" width="320" height="40"/></clipPath>
<g opacity="0.25" fill="none" stroke="#fff" stroke-width="5" stroke-linecap="round" stroke-linejoin="round">
<path d="M1712 30h34q12 0 12 12v10q0 13-12 13h-34q-12 0-12-13v-10q0-12 12-12z"/>
<path d="M1710 31l4-8 5 7M1740 30l5-7 4 8" stroke-width="3.500"/>
<path d="M1719 36.500h21M1721 42.500h17M1719 48.500h21M1729.500 36.500v12" stroke-width="3.500"/>
<path d="M1725 51.500l10 6-10 6z" stroke-width="3"/>
</g>
<g clip-path="url(#wmt)" opacity="0.5" fill="none" stroke="#fff" stroke-width="0.8"><path d="M1712 27.500h34q14.500 0 14.500 14.500v10q0 15.500-14.500 15.500h-34q-14.500 0-14.500-15.500v-10q0-14.500 14.500-14.500z"/><path d="M1712 32.500h34q9.500 0 9.500 9.500v10q0 10.500-9.500 10.500h-34q-9.500 0-9.500-10.500v-10q0-9.500 9.500-9.500z"/></g>
<g clip-path="url(#wmb)" opacity="0.45" fill="none" stroke="#8a8a8a" stroke-width="0.9"><path d="M1712 27.500h34q14.500 0 14.500 14.500v10q0 15.500-14.500 15.500h-34q-14.500 0-14.500-15.500v-10q0-14.500 14.500-14.500z"/><path d="M1712 32.500h34q9.500 0 9.500 9.500v10q0 10.500-9.500 10.500h-34q-9.500 0-9.500-10.500v-10q0-9.500 9.500-9.500z"/></g>
<text transform="translate(1763,64) scale(0.04558,0.053)" font-size="1000" font-weight="bold" fill="#fff" opacity="0.22">虎</text>
<g clip-path="url(#wmt)">
<text transform="translate(1763,64) scale(0.04558,0.053)" font-size="1000" font-weight="bold" fill="none" opacity="0.62" stroke="#fff" stroke-width="17.0">虎</text>
</g><g clip-path="url(#wmb)">
<text transform="translate(1763,64) scale(0.04558,0.053)" font-size="1000" font-weight="bold" fill="none" opacity="0.45" stroke="#8a8a8a" stroke-width="17.0">虎</text>
</g>
<text transform="translate(1808.8,64) scale(0.04558,0.053)" font-size="1000" font-weight="bold" fill="#fff" opacity="0.22">课</text>
<g clip-path="url(#wmt)">
<text transform="translate(1808.8,64) scale(0.04558,0.053)" font-size="1000" font-weight="bold" fill="none" opacity="0.62" stroke="#fff" stroke-width="17.0">课</text>
</g><g clip-path="url(#wmb)">
<text transform="translate(1808.8,64) scale(0.04558,0.053)" font-size="1000" font-weight="bold" fill="none" opacity="0.45" stroke="#8a8a8a" stroke-width="17.0">课</text>
</g>
<text transform="translate(1854.6,64) scale(0.04558,0.053)" font-size="1000" font-weight="bold" fill="#fff" opacity="0.22">网</text>
<g clip-path="url(#wmt)">
<text transform="translate(1854.6,64) scale(0.04558,0.053)" font-size="1000" font-weight="bold" fill="none" opacity="0.62" stroke="#fff" stroke-width="17.0">网</text>
</g><g clip-path="url(#wmb)">
<text transform="translate(1854.6,64) scale(0.04558,0.053)" font-size="1000" font-weight="bold" fill="none" opacity="0.45" stroke="#8a8a8a" stroke-width="17.0">网</text>
</g>
</svg>
</body></html>
